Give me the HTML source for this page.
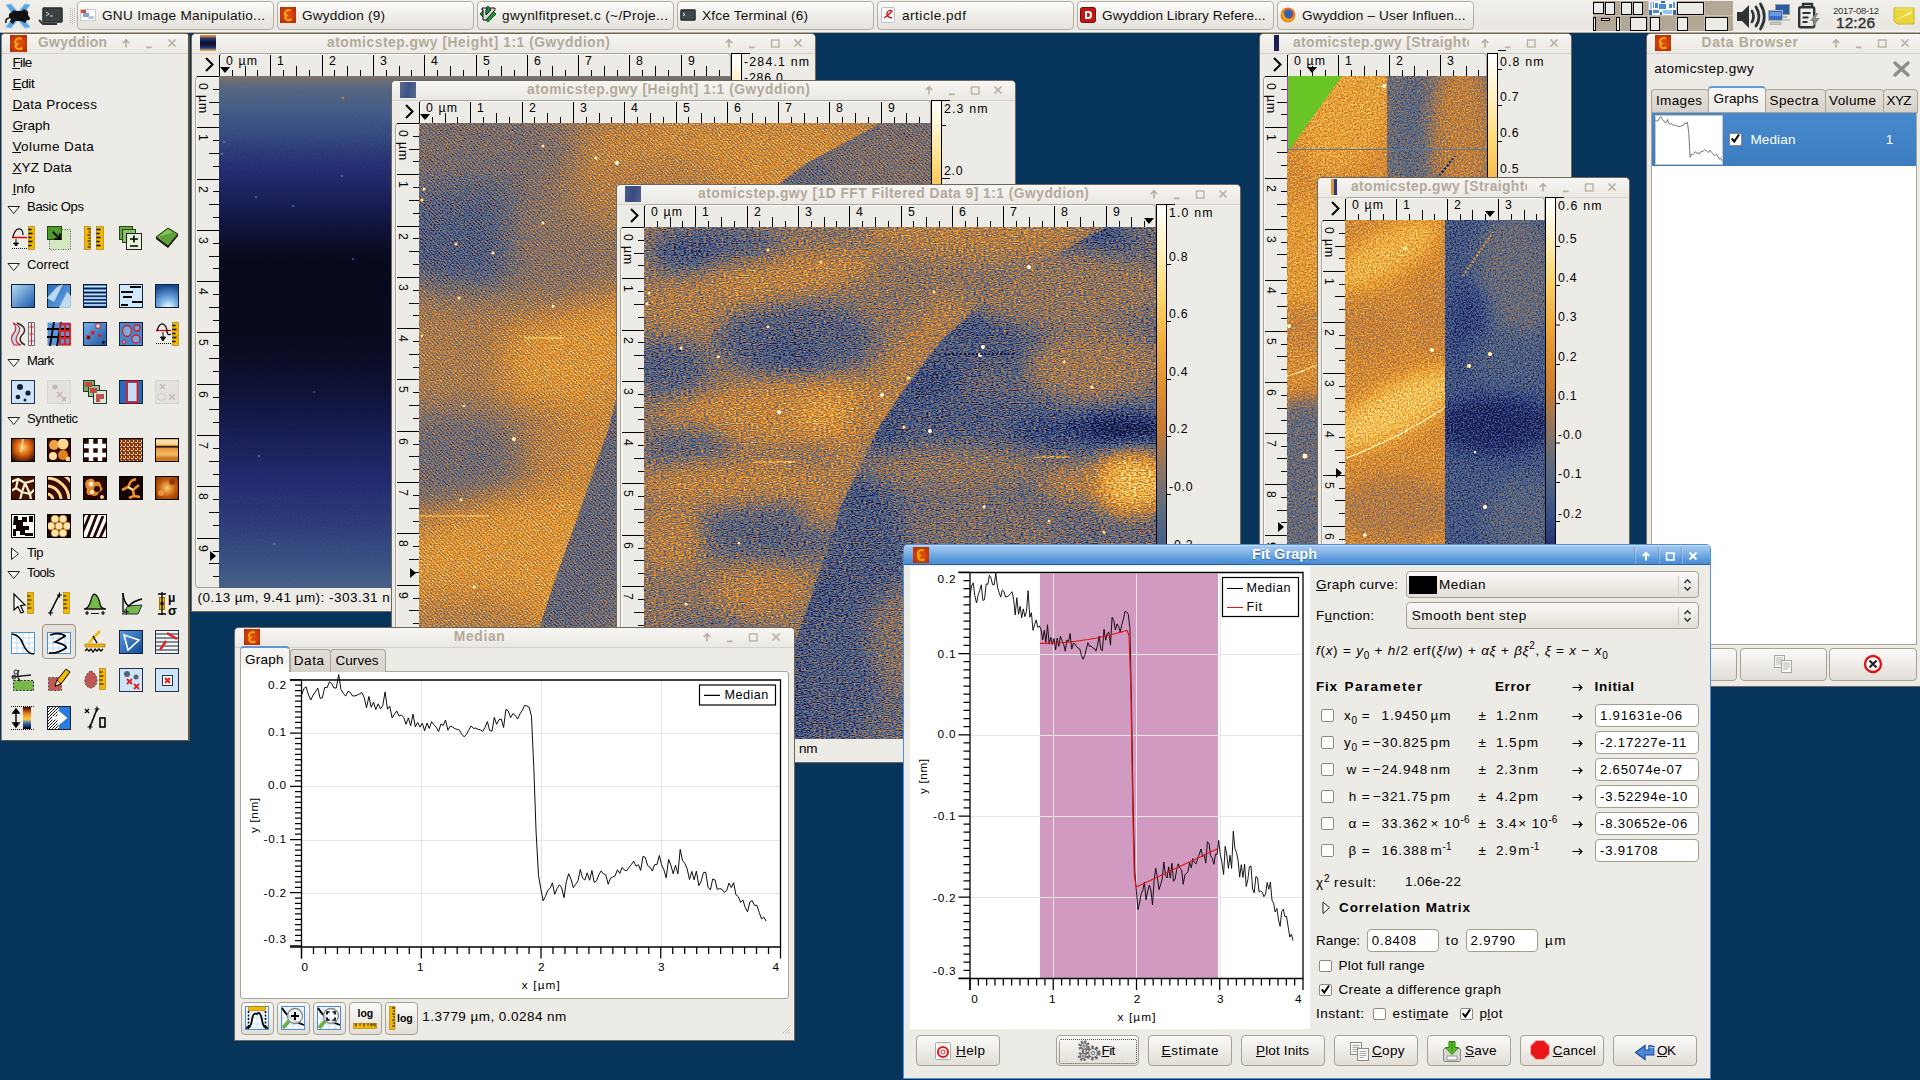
<!DOCTYPE html><html><head><meta charset="utf-8"><title>desktop</title><style>
html,body{margin:0;padding:0}
body{width:1920px;height:1080px;background:#07345b;position:relative;overflow:hidden;font-family:"Liberation Sans",sans-serif;font-size:14px;color:#000}
.a{position:absolute;box-sizing:border-box}
.t{position:absolute;white-space:pre;display:block}
.win{position:absolute;background:#edebe6;box-sizing:border-box;border:1px solid #c9c4bb;border-radius:4px 4px 0 0;overflow:hidden}
.tb{position:absolute;left:0;top:0;right:0;height:19px;background:linear-gradient(#f7f6f3,#ebe8e3);border-bottom:1px solid #d6d2ca}
.tba{background:linear-gradient(#7fb0e2,#4a8ad0 45%,#3a7cc6);border-bottom:1px solid #2f6bb0}
.btn{position:absolute;box-sizing:border-box;border:1px solid #a8a294;border-radius:4px;background:linear-gradient(#fbfaf9,#ece9e4 60%,#e2ded7)}
.ent{position:absolute;box-sizing:border-box;border:1px solid #a39d90;border-radius:4px;background:#fff}
.cb{position:absolute;box-sizing:border-box;width:13px;height:13px;border:1px solid #8f897c;border-radius:2px;background:#fff}
svg{position:absolute;overflow:visible}
u{text-decoration:underline;text-underline-offset:1px}
</style></head><body>
<div class="a" style="left:0;top:0;width:1920px;height:33px;background:linear-gradient(#f1efeb,#eae7e2 90%,#f6f5f2);border-bottom:1px solid #b3aa9a"></div>
<svg style="left:3px;top:2px" width="30" height="28" viewBox="0 0 30 28">
<path d="M3 3 L8 2 L15 10 L22 2 L27 3 L19 14 L27 25 L22 26 L15 18 L8 26 L3 25 L11 14 Z" fill="#5aa5e0" stroke="#8cc4ee" stroke-width="1"/>
<path d="M6 16 Q5 11 9 10 Q10 7 13 9 L19 9 Q20 6 23 8 Q26 9 25 13 L27 16 Q27 19 24 18 L22 21 L18 19 L12 19 L10 22 L7 20 L8 17 Z" fill="#111"/>
<path d="M6 16 Q2 17 3 21" stroke="#111" stroke-width="1.5" fill="none"/>
</svg>
<svg style="left:39px;top:7px" width="25" height="20" viewBox="0 0 25 20">
<rect x="3.500" y="0.500" width="20" height="15" rx="1.500" fill="#2e3436" stroke="#555753"/>
<rect x="5" y="2" width="17" height="12" fill="#3c4143"/>
<path d="M7 5 l3 2 l-3 2 M11 9 h3" stroke="#d3d7cf" stroke-width="1" fill="none"/>
<path d="M0 13 l4 4 h14" stroke="#2e3436" stroke-width="2" fill="none"/>
</svg>
<div class="a" style="left:70px;top:8px;width:1px;height:1px;background:#b9b4aa"></div>
<div class="a" style="left:72px;top:9px;width:1px;height:1px;background:#b9b4aa"></div>
<div class="a" style="left:74px;top:8px;width:1px;height:1px;background:#b9b4aa"></div>
<div class="a" style="left:70px;top:10px;width:1px;height:1px;background:#b9b4aa"></div>
<div class="a" style="left:72px;top:11px;width:1px;height:1px;background:#b9b4aa"></div>
<div class="a" style="left:74px;top:10px;width:1px;height:1px;background:#b9b4aa"></div>
<div class="a" style="left:70px;top:12px;width:1px;height:1px;background:#b9b4aa"></div>
<div class="a" style="left:72px;top:13px;width:1px;height:1px;background:#b9b4aa"></div>
<div class="a" style="left:74px;top:12px;width:1px;height:1px;background:#b9b4aa"></div>
<div class="a" style="left:70px;top:14px;width:1px;height:1px;background:#b9b4aa"></div>
<div class="a" style="left:72px;top:15px;width:1px;height:1px;background:#b9b4aa"></div>
<div class="a" style="left:74px;top:14px;width:1px;height:1px;background:#b9b4aa"></div>
<div class="a" style="left:70px;top:16px;width:1px;height:1px;background:#b9b4aa"></div>
<div class="a" style="left:72px;top:17px;width:1px;height:1px;background:#b9b4aa"></div>
<div class="a" style="left:74px;top:16px;width:1px;height:1px;background:#b9b4aa"></div>
<div class="a" style="left:70px;top:18px;width:1px;height:1px;background:#b9b4aa"></div>
<div class="a" style="left:72px;top:19px;width:1px;height:1px;background:#b9b4aa"></div>
<div class="a" style="left:74px;top:18px;width:1px;height:1px;background:#b9b4aa"></div>
<div class="a" style="left:70px;top:20px;width:1px;height:1px;background:#b9b4aa"></div>
<div class="a" style="left:72px;top:21px;width:1px;height:1px;background:#b9b4aa"></div>
<div class="a" style="left:74px;top:20px;width:1px;height:1px;background:#b9b4aa"></div>
<div class="a" style="left:70px;top:22px;width:1px;height:1px;background:#b9b4aa"></div>
<div class="a" style="left:72px;top:23px;width:1px;height:1px;background:#b9b4aa"></div>
<div class="a" style="left:74px;top:22px;width:1px;height:1px;background:#b9b4aa"></div>
<div class="btn" style="left:77px;top:1px;width:197px;height:29px;border-color:#b5afa3;background:linear-gradient(#fdfdfc,#efede9 50%,#e6e3dd)"></div>
<svg style="left:80px;top:7px" width="16" height="16"><rect x="0.500" y="2.500" width="15" height="11" fill="#fff" stroke="#c8c8c8"/><rect x="1" y="3" width="5" height="3" fill="#d04a3a"/><rect x="3" y="6" width="6" height="4" fill="#7aa6d8"/><rect x="8" y="9" width="6" height="3" fill="#b8c8e0"/></svg>
<span class="t" style="left:102.00px;top:9.00px;font-size:13.6px;line-height:13.6px;letter-spacing:0.287px;color:#111;">GNU Image Manipulatio...</span>
<div class="btn" style="left:277px;top:1px;width:197px;height:29px;border-color:#b5afa3;background:linear-gradient(#fdfdfc,#efede9 50%,#e6e3dd)"></div>
<svg style="left:280px;top:7px" width="16" height="16" viewBox="0 0 16 16"><defs><radialGradient id="gi280_7" cx="50%" cy="50%" r="70%"><stop offset="0" stop-color="#e8560e"/><stop offset="1" stop-color="#b02a08"/></radialGradient></defs><rect width="16" height="16" fill="url(#gi280_7)"/><path d="M11 3.500 Q6 2 5 6 Q4.500 8.500 7.500 8.500 Q4.500 9.500 5.500 11.500 Q7 14 10.500 12.500 L10.500 14" stroke="#ffb010" stroke-width="1.800" fill="none"/></svg>
<span class="t" style="left:302.00px;top:9.00px;font-size:13.6px;line-height:13.6px;letter-spacing:0.189px;color:#111;">Gwyddion (9)</span>
<div class="btn" style="left:477px;top:1px;width:197px;height:29px;border-color:#b5afa3;background:linear-gradient(#fdfdfc,#efede9 50%,#e6e3dd)"></div>
<svg style="left:480px;top:6px" width="17" height="17"><path d="M8 0 L16 8 L8 16 L0 8 Z" fill="#1a9a3a" stroke="#0a5a1a"/><path d="M2 2 h5 v2 h-1 v5 l5 -5 h-1 v-2 h5 v2 l-9 10 h-3 v-10 h-1 z" fill="#d8d8d8" stroke="#111" stroke-width="1"/></svg>
<span class="t" style="left:502.00px;top:9.00px;font-size:13.6px;line-height:13.6px;letter-spacing:0.340px;color:#111;">gwynlfitpreset.c (~/Proje...</span>
<div class="btn" style="left:677px;top:1px;width:197px;height:29px;border-color:#b5afa3;background:linear-gradient(#fdfdfc,#efede9 50%,#e6e3dd)"></div>
<svg style="left:680px;top:7px" width="16" height="16"><rect x="0.500" y="2.500" width="15" height="11" rx="1" fill="#2e3436" stroke="#555753"/><rect x="2" y="4" width="12" height="8" fill="#40464a"/><path d="M3 6 l2 1.500 l-2 1.500" stroke="#eee" fill="none"/></svg>
<span class="t" style="left:702.00px;top:9.00px;font-size:13.6px;line-height:13.6px;letter-spacing:0.216px;color:#111;">Xfce Terminal (6)</span>
<div class="btn" style="left:877px;top:1px;width:197px;height:29px;border-color:#b5afa3;background:linear-gradient(#fdfdfc,#efede9 50%,#e6e3dd)"></div>
<svg style="left:880px;top:7px" width="16" height="16"><rect x="1.500" y="0.500" width="13" height="15" rx="1.500" fill="#fff" stroke="#c0c0c0"/><path d="M4 11 Q9 8 12 4 Q9 2 7 6 Q6 10 12 11" stroke="#d01010" stroke-width="1.300" fill="none"/></svg>
<span class="t" style="left:902.00px;top:9.00px;font-size:13.6px;line-height:13.6px;letter-spacing:0.498px;color:#111;">article.pdf</span>
<div class="btn" style="left:1077px;top:1px;width:197px;height:29px;border-color:#b5afa3;background:linear-gradient(#fdfdfc,#efede9 50%,#e6e3dd)"></div>
<svg style="left:1080px;top:7px" width="16" height="16"><rect x="0.500" y="0.500" width="15" height="15" rx="2" fill="#c01818" stroke="#7a0c0c"/><path d="M5 4 h3.500 q3.500 0 3.500 4 q0 4 -3.500 4 h-3.500 z M7 6 v4 h1.500 q1.500 0 1.500 -2 q0 -2 -1.500 -2 z" fill="#fff" fill-rule="evenodd"/></svg>
<span class="t" style="left:1102.00px;top:9.00px;font-size:13.6px;line-height:13.6px;letter-spacing:0.072px;color:#111;">Gwyddion Library Refere...</span>
<div class="btn" style="left:1277px;top:1px;width:197px;height:29px;border-color:#b5afa3;background:linear-gradient(#fdfdfc,#efede9 50%,#e6e3dd)"></div>
<svg style="left:1280px;top:7px" width="16" height="16"><circle cx="8" cy="8" r="7.500" fill="#e8781a"/><circle cx="8.500" cy="7" r="4.500" fill="#3a5fb0"/><path d="M1 6 Q2 13 8 15 Q14 14 15 8 Q13 12 9 12 Q4 11 4 6 Q2 4 1 6Z" fill="#f0a020"/></svg>
<span class="t" style="left:1302.00px;top:9.00px;font-size:13.6px;line-height:13.6px;letter-spacing:0.132px;color:#111;">Gwyddion – User Influen...</span>
<div class="a" style="left:1593px;top:1px;width:140px;height:30px;background:#b3a896"></div>
<div class="a" style="left:1620.08px;top:1px;width:0.8px;height:30px;background:#c9c0af"></div>
<div class="a" style="left:1647.81px;top:1px;width:0.8px;height:30px;background:#c9c0af"></div>
<div class="a" style="left:1675.94px;top:1px;width:0.8px;height:30px;background:#c9c0af"></div>
<div class="a" style="left:1704.06px;top:1px;width:0.8px;height:30px;background:#c9c0af"></div>
<div class="a" style="left:1593px;top:15px;width:140px;height:1px;background:#c9c0af"></div>
<div class="a" style="left:1648.5px;top:1px;width:27.5px;height:14px;background:#fafcff;"></div>
<div class="a" style="left:1593px;top:1.5px;width:10.5px;height:12px;background:#edebe6;border:1px solid #000;"></div>
<div class="a" style="left:1604.5px;top:1.5px;width:10px;height:13px;background:#edebe6;border:1px solid #000;"></div>
<div class="a" style="left:1621px;top:1.5px;width:10.5px;height:13px;background:#edebe6;border:1px solid #000;"></div>
<div class="a" style="left:1632.5px;top:1.5px;width:10px;height:13px;background:#edebe6;border:1px solid #000;"></div>
<div class="a" style="left:1677px;top:1.5px;width:26.5px;height:13px;background:#edebe6;border:1px solid #000;"></div>
<div class="a" style="left:1593px;top:16.5px;width:2.5px;height:14px;background:#edebe6;border:1px solid #000;"></div>
<div class="a" style="left:1601px;top:18px;width:9px;height:2.5px;background:#edebe6;border:1px solid #000;"></div>
<div class="a" style="left:1616px;top:16.5px;width:3.5px;height:14px;background:#edebe6;border:1px solid #000;"></div>
<div class="a" style="left:1630px;top:16.5px;width:17px;height:14px;background:#edebe6;border:1px solid #000;"></div>
<div class="a" style="left:1649.5px;top:16.5px;width:10px;height:14px;background:#edebe6;border:1px solid #000;"></div>
<div class="a" style="left:1677px;top:16.5px;width:10.5px;height:14px;background:#edebe6;border:1px solid #000;"></div>
<div class="a" style="left:1705px;top:16.5px;width:22.5px;height:14px;background:#edebe6;border:1px solid #000;"></div>
<div class="a" style="left:1650px;top:2px;width:2px;height:6.5px;background:#9cc8f4;"></div>
<div class="a" style="left:1652.5px;top:2px;width:1.5px;height:6px;background:#5a98dc;"></div>
<div class="a" style="left:1655px;top:3px;width:2.5px;height:5px;background:#4a8ad0;"></div>
<div class="a" style="left:1659px;top:4px;width:7px;height:4.5px;background:#4a8ad0;"></div>
<div class="a" style="left:1660.5px;top:1px;width:4.5px;height:1.5px;background:#3868a8;"></div>
<div class="a" style="left:1669px;top:4px;width:2.5px;height:4px;background:#4a8ad0;"></div>
<div class="a" style="left:1673px;top:2px;width:2px;height:6px;background:#5a98dc;"></div>
<div class="a" style="left:1649px;top:10px;width:2.5px;height:4.5px;background:#3868a8;"></div>
<div class="a" style="left:1652.5px;top:10px;width:6.5px;height:2.5px;background:#4a8ad0;"></div>
<div class="a" style="left:1663px;top:9.5px;width:9px;height:4.5px;background:#8fc4f4;"></div>
<div class="a" style="left:1673px;top:9.5px;width:2.5px;height:5.5px;background:#3868a8;"></div>
<div class="a" style="left:1660px;top:11.5px;width:1.5px;height:3px;background:#3868a8;"></div>
<svg style="left:1736px;top:3px" width="30" height="27" viewBox="0 0 30 27">
<path d="M1 9 h5 l7 -7 v23 l-7 -7 h-5 z" fill="#2e3436"/>
<path d="M16 8 q3 5.500 0 11" stroke="#2e3436" stroke-width="2.600" fill="none" stroke-linecap="round"/>
<path d="M20 4 q6 9.500 0 19" stroke="#2e3436" stroke-width="2.800" fill="none" stroke-linecap="round"/>
<path d="M24.500 1 q7.500 12.500 0 25" stroke="#2e3436" stroke-width="2.800" fill="none" stroke-linecap="round"/>
</svg>
<svg style="left:1768px;top:4px" width="24" height="22" viewBox="0 0 24 22">
<rect x="7.500" y="0.500" width="14" height="10" fill="#2a5aa8" stroke="#9a9a94"/>
<rect x="10" y="12" width="9" height="2" fill="#b8b8b0"/>
<rect x="0.500" y="6.500" width="14" height="10" fill="#3a6ec0" stroke="#b0b0a8"/>
<rect x="2" y="8" width="11" height="4" fill="#6a9ae0"/>
<rect x="2" y="18" width="11" height="2.500" fill="#c8c8c0" stroke="#909088" stroke-width="0.500"/>
<rect x="14" y="15" width="8" height="2" fill="#c8c8c0"/>
</svg>
<svg style="left:1797px;top:3px" width="26" height="26" viewBox="0 0 26 26">
<path d="M6 3 v-2 h9 v2" stroke="#2e3436" stroke-width="2.400" fill="none"/>
<rect x="2.200" y="4.200" width="15" height="20" rx="1.500" fill="none" stroke="#2e3436" stroke-width="2.400"/>
<path d="M5.500 10 h8 M5.500 14.500 h6 M5.500 19 h5" stroke="#2e3436" stroke-width="2.200"/>
<path d="M19 10 l-6 8 h4 l-2 7 l8 -10 h-4.500 l3 -5 z" fill="#8a8a86"/>
</svg>
<span class="t" style="left:1833.00px;top:6.00px;font-size:9.5px;line-height:9.5px;letter-spacing:-0.283px;color:#2e3436;">2017-08-12</span>
<span class="t" style="left:1836.00px;top:15.00px;font-size:15.5px;line-height:15.5px;letter-spacing:0.062px;color:#2e3436;-webkit-text-stroke:0.4px #2e3436;">12:26</span>
<svg style="left:1893px;top:7px" width="22" height="19" viewBox="0 0 22 19">
<path d="M1 1 h20 v16 h-17 l-3 -3 z" fill="#e8d63a" stroke="#c9b51c"/>
<path d="M1 14 L19 4 L19 6 Z" fill="#fffbe0"/>
<path d="M2 2 h18" stroke="#f4ec80"/>
</svg>
<div class="win" style="left:1px;top:33px;width:189px;height:708px;border-color:#6e685c #5a5446 #5a5446 #8a8478;border-right-width:2px">
<div class="tb"></div><svg style="left:8px;top:1px" width="17" height="17" viewBox="0 0 16 16"><defs><radialGradient id="gi8_1" cx="50%" cy="50%" r="70%"><stop offset="0" stop-color="#e8560e"/><stop offset="1" stop-color="#b02a08"/></radialGradient></defs><rect width="16" height="16" fill="url(#gi8_1)"/><path d="M11 3.500 Q6 2 5 6 Q4.500 8.500 7.500 8.500 Q4.500 9.500 5.500 11.500 Q7 14 10.500 12.500 L10.500 14" stroke="#ffb010" stroke-width="1.800" fill="none"/></svg><span class="t" style="left:36.00px;top:2.00px;font-size:13.8px;line-height:13.8px;letter-spacing:0.335px;font-weight:bold;color:#b3a999;">Gwyddion</span>
<svg style="left:118px;top:2.6px" width="12" height="12"><path d="M6 10.500 V3 M2.800 6 L6 2.800 L9.200 6" stroke="#b9b0a2" stroke-width="1.7" fill="none"/></svg><svg style="left:141px;top:2.6px" width="12" height="12"><path d="M3 10.300 H8.500" stroke="#b9b0a2" stroke-width="1.7"/></svg><svg style="left:164px;top:2.6px" width="12" height="12"><path d="M2.500 2.500 L9.500 9.500 M9.500 2.500 L2.500 9.500" stroke="#b9b0a2" stroke-width="1.7"/></svg>
<span class="t" style="left:10.40px;top:22.00px;font-size:13.5px;line-height:13.5px;letter-spacing:-0.600px;"><u>F</u>ile</span>
<span class="t" style="left:10.40px;top:43.00px;font-size:13.5px;line-height:13.5px;letter-spacing:-0.285px;"><u>E</u>dit</span>
<span class="t" style="left:10.40px;top:64.00px;font-size:13.5px;line-height:13.5px;letter-spacing:0.318px;"><u>D</u>ata Process</span>
<span class="t" style="left:10.40px;top:85.00px;font-size:13.5px;line-height:13.5px;letter-spacing:-0.008px;"><u>G</u>raph</span>
<span class="t" style="left:10.40px;top:106.00px;font-size:13.5px;line-height:13.5px;letter-spacing:0.414px;"><u>V</u>olume Data</span>
<span class="t" style="left:10.40px;top:127.00px;font-size:13.5px;line-height:13.5px;letter-spacing:0.130px;"><u>X</u>YZ Data</span>
<span class="t" style="left:10.40px;top:148.00px;font-size:13.5px;line-height:13.5px;letter-spacing:-0.015px;"><u>I</u>nfo</span>
<svg style="left:5px;top:170.5px" width="14" height="10"><path d="M1 1.500 H12.500 L6.750 8.500 Z" fill="#fff" stroke="#222" stroke-width="1"/></svg>
<span class="t" style="left:25.00px;top:166.00px;font-size:13px;line-height:13px;letter-spacing:-0.285px;">Basic Ops</span>
<svg style="left:5px;top:228px" width="14" height="10"><path d="M1 1.500 H12.500 L6.750 8.500 Z" fill="#fff" stroke="#222" stroke-width="1"/></svg>
<span class="t" style="left:25.00px;top:224.00px;font-size:13px;line-height:13px;letter-spacing:-0.107px;">Correct</span>
<svg style="left:5px;top:324px" width="14" height="10"><path d="M1 1.500 H12.500 L6.750 8.500 Z" fill="#fff" stroke="#222" stroke-width="1"/></svg>
<span class="t" style="left:25.00px;top:320.00px;font-size:13px;line-height:13px;letter-spacing:-0.600px;">Mark</span>
<svg style="left:5px;top:382px" width="14" height="10"><path d="M1 1.500 H12.500 L6.750 8.500 Z" fill="#fff" stroke="#222" stroke-width="1"/></svg>
<span class="t" style="left:25.00px;top:378.00px;font-size:13px;line-height:13px;letter-spacing:-0.304px;">Synthetic</span>
<svg style="left:8px;top:513px" width="10" height="14"><path d="M1.500 1 V12.500 L8.500 6.750 Z" fill="#fff" stroke="#222" stroke-width="1"/></svg>
<span class="t" style="left:25.00px;top:512.00px;font-size:13px;line-height:13px;letter-spacing:-0.600px;">Tip</span>
<svg style="left:5px;top:536px" width="14" height="10"><path d="M1 1.500 H12.500 L6.750 8.500 Z" fill="#fff" stroke="#222" stroke-width="1"/></svg>
<span class="t" style="left:25.00px;top:532.00px;font-size:13px;line-height:13px;letter-spacing:-0.572px;">Tools</span>
<svg style="left:9px;top:192px;overflow:hidden" width="24" height="24" viewBox="0 0 24 24"><path d="M1 11.500 h15" stroke="#d00" stroke-width="1.300"/><path d="M2 11 Q4 2 9 3 Q12 4 12 9" stroke="#111" fill="none" stroke-width="1.300"/><path d="M5 13 v6 M2.500 17 l2.500 3 l2.500 -3 z" stroke="#111" fill="#111" stroke-width="1"/><path d="M1 22.500 h15" stroke="#111" stroke-dasharray="1 1"/><rect x="17.500" y="0.500" width="6" height="23" fill="#f5b800" stroke="#a07800" stroke-width="0.600"/><path d="M17.500 3.500 h3 M17.500 7.500 h4 M17.500 11.500 h3 M17.500 15.500 h4 M17.500 19.500 h3" stroke="#000" stroke-width="1.400"/></svg>
<svg style="left:45px;top:192px;overflow:hidden" width="24" height="24" viewBox="0 0 24 24"><rect x="2.500" y="3.500" width="21" height="20" fill="#d4e8c0" stroke="#555" stroke-dasharray="1 1.500"/><rect x="0.500" y="0.500" width="14" height="13" fill="#4f9a2c" stroke="#1e4a10"/><path d="M6 6 L13 13 M13 7.500 V13 H7.500" stroke="#000" stroke-width="1.800" fill="none"/></svg>
<svg style="left:81px;top:192px;overflow:hidden" width="24" height="24" viewBox="0 0 24 24"><rect x="1.500" y="0.500" width="6" height="23" fill="#f5b800" stroke="#a07800" stroke-width="0.600"/><rect x="13.500" y="0.500" width="7" height="23" fill="#f5b800" stroke="#a07800" stroke-width="0.600"/><path d="M4.500 3 h3 M5.500 6 h2 M4.500 9 h3 M5.500 12 h2 M4.500 15 h3 M5.500 18 h2 M4.500 21 h3" stroke="#000" stroke-width="1.200"/><path d="M13.500 3.500 h4 M13.500 7.500 h3 M13.500 11.500 h4 M13.500 15.500 h3 M13.500 19.500 h4" stroke="#000" stroke-width="1.500"/></svg>
<svg style="left:117px;top:192px;overflow:hidden" width="24" height="24" viewBox="0 0 24 24"><rect x="0.500" y="0.500" width="13" height="13" fill="#6aa84a" stroke="#1e4a10"/><rect x="3.500" y="3.500" width="13" height="13" fill="#8cc06c" stroke="#1e4a10"/><rect x="7.500" y="7.500" width="15" height="16" fill="#e4f2d8" stroke="#222"/><path d="M11 13 h8 M15 9.500 v7 M11 20 h8" stroke="#000" stroke-width="1.600"/></svg>
<svg style="left:153px;top:192px;overflow:hidden" width="24" height="24" viewBox="0 0 24 24"><path d="M1 11 L13 2 L23 8 L13 20 Z" fill="#5f9f3a" stroke="#1e3a10" stroke-width="1"/><path d="M1 11 L13 20 L23 8 L23 10 L13 22 L1 13 Z" fill="#111"/><path d="M3 11 L13 3.500 L18 6.500 Z" fill="#9ad070" opacity="0.700"/></svg>
<svg style="left:9px;top:250px;overflow:hidden" width="24" height="24" viewBox="0 0 24 24"><defs><linearGradient id="bl1" x1="0" y1="0" x2="1" y2="1"><stop offset="0" stop-color="#b8dcf8"/><stop offset="1" stop-color="#1a5aa8"/></linearGradient></defs><rect x="0.500" y="0.500" width="23" height="23" fill="url(#bl1)" stroke="#123"/></svg>
<svg style="left:45px;top:250px;overflow:hidden" width="24" height="24" viewBox="0 0 24 24"><defs><linearGradient id="bl2" x1="0" y1="0" x2="1" y2="1"><stop offset="0" stop-color="#2a6ab8"/><stop offset="1" stop-color="#6aa8e8"/></linearGradient></defs><rect x="0.500" y="0.500" width="23" height="23" fill="url(#bl2)" stroke="#123"/><path d="M0 14 L10 3 L16 0 L7 18 Z M12 24 L20 8 L24 12 L24 24 Z" fill="#d8ecfc" opacity="0.800"/></svg>
<svg style="left:81px;top:250px;overflow:hidden" width="24" height="24" viewBox="0 0 24 24"><rect x="0.500" y="0.500" width="23" height="23" fill="#2a66b0" stroke="#123"/><path d="M1 2.500 h22 M1 6.500 h22 M1 10.500 h22 M1 14 h22 M1 17.500 h22 M1 21 h22" stroke="#d4e8fc" stroke-width="1.600"/><path d="M1 4.500 h22 M1 8.500 h22 M1 12.300 h22 M1 15.800 h22 M1 19.300 h22 M1 22.600 h22" stroke="#0a2050" stroke-width="1.100"/></svg>
<svg style="left:117px;top:250px;overflow:hidden" width="24" height="24" viewBox="0 0 24 24"><rect x="0.500" y="0.500" width="23" height="23" fill="#d0e8fc" stroke="#123"/><path d="M11 3 h11 M2 8 h12 M4 13 h9 M13 18 h10 M2 21 h7" stroke="#000" stroke-width="2"/></svg>
<svg style="left:153px;top:250px;overflow:hidden" width="24" height="24" viewBox="0 0 24 24"><defs><radialGradient id="bl5" cx="0.550" cy="1" r="0.950"><stop offset="0" stop-color="#fff"/><stop offset="0.400" stop-color="#7ab4e8"/><stop offset="1" stop-color="#174a90"/></radialGradient></defs><rect x="0.500" y="0.500" width="23" height="23" fill="url(#bl5)" stroke="#123"/></svg>
<svg style="left:9px;top:288px;overflow:hidden" width="24" height="24" viewBox="0 0 24 24"><path d="M2 1 Q12 4 7 12 Q2 20 10 23 L3 23 Q-2 16 3 11 Q7 5 2 1Z" fill="#c8dcf0" stroke="#c03030" stroke-width="1.200"/><path d="M6 1 Q18 6 11 13 Q6 19 14 23" stroke="#333" fill="none" stroke-width="1.500"/><rect x="17.500" y="0.500" width="6" height="23" fill="#e8f0fa" stroke="#555" stroke-width="0.800"/><path d="M20.500 1 v22 M18.500 5 h4 M18.500 12 h4 M18.500 19 h4" stroke="#d02020" stroke-width="1.100"/></svg>
<svg style="left:45px;top:288px;overflow:hidden" width="24" height="24" viewBox="0 0 24 24"><rect x="0.500" y="0.500" width="23" height="23" fill="#5a96d8"/><path d="M7 0 L3 24 M14 0 L10 24 M0 7 h24 M0 15 h24" stroke="#000" stroke-width="1.800"/><path d="M13 1 v22 M18 1 v22 M23 1 v22 M12 2 h12 M12 9 h12 M12 16 h12 M12 22.500 h12" stroke="#e02020" stroke-width="1.800"/></svg>
<svg style="left:81px;top:288px;overflow:hidden" width="24" height="24" viewBox="0 0 24 24"><defs><linearGradient id="bl8" x1="0" y1="0" x2="1" y2="1"><stop offset="0" stop-color="#7ab0e8"/><stop offset="1" stop-color="#1a56a4"/></linearGradient></defs><rect x="0.500" y="0.500" width="23" height="23" fill="url(#bl8)" stroke="#123"/><rect x="13" y="2" width="4" height="4" fill="#fff" stroke="#d02020"/><rect x="8" y="9" width="3.500" height="3.500" fill="#d02020"/><rect x="15" y="12" width="3" height="3" fill="#d02020"/><rect x="4" y="14" width="3" height="3" fill="#000" stroke="#d02020"/><rect x="19" y="19" width="2.500" height="2.500" fill="#000"/></svg>
<svg style="left:117px;top:288px;overflow:hidden" width="24" height="24" viewBox="0 0 24 24"><rect x="0.500" y="0.500" width="23" height="23" fill="#4a86d0" stroke="#123"/><ellipse cx="8" cy="9" rx="4.500" ry="5.500" fill="#7aaae0" stroke="#d02020" stroke-width="1.300"/><circle cx="18" cy="6" r="3" fill="#7aaae0" stroke="#d02020" stroke-width="1.300"/><circle cx="17" cy="17" r="4" fill="#7aaae0" stroke="#d02020" stroke-width="1.300"/><circle cx="5" cy="20" r="2" fill="#7aaae0" stroke="#d02020"/></svg>
<svg style="left:153px;top:288px;overflow:hidden" width="24" height="24" viewBox="0 0 24 24"><path d="M1 8.500 h15" stroke="#d00" stroke-width="1.300"/><path d="M2 9 Q4 1 8 2 Q12 4 12 10 Q13 14 16 12" stroke="#111" fill="none" stroke-width="1.300"/><path d="M8 10 v8 M5.500 15 l2.500 4 l2.500 -4 z" stroke="#111" fill="#111" stroke-width="1"/><path d="M1 21.500 h15" stroke="#111" stroke-dasharray="1 1"/><rect x="17.500" y="0.500" width="6" height="23" fill="#f5b800" stroke="#a07800" stroke-width="0.600"/><path d="M17.500 3.500 h3 M17.500 7.500 h4 M17.500 11.500 h3 M17.500 15.500 h4 M17.500 19.500 h3" stroke="#000" stroke-width="1.400"/></svg>
<svg style="left:9px;top:346px;overflow:hidden" width="24" height="24" viewBox="0 0 24 24"><rect x="0.500" y="0.500" width="23" height="23" fill="#cfe4f8" stroke="#234"/><circle cx="9" cy="7" r="3" fill="#123"/><circle cx="17" cy="13" r="2.600" fill="#123"/><circle cx="7" cy="17" r="2.300" fill="#123"/><circle cx="14" cy="20" r="1.500" fill="#123"/></svg>
<svg style="left:45px;top:346px;overflow:hidden" width="24" height="24" viewBox="0 0 24 24"><rect x="0.500" y="0.500" width="23" height="23" fill="#e4e2de" stroke="#c8c4bc" stroke-dasharray="1 1"/><circle cx="8" cy="7" r="2.500" fill="#bdbab4"/><path d="M10 12 l5 5 m0 -5 l-5 5 M15 17 l4 4 m0 -4 l-4 4" stroke="#c8b0b0" stroke-width="1.500"/></svg>
<svg style="left:81px;top:346px;overflow:hidden" width="24" height="24" viewBox="0 0 24 24"><rect x="0.500" y="0.500" width="11" height="11" fill="#78b050" stroke="#234"/><rect x="5.500" y="5.500" width="11" height="11" fill="#98c878" stroke="#234"/><rect x="10.500" y="10.500" width="13" height="13" fill="#d8ecd0" stroke="#234"/><rect x="2" y="2" width="7" height="5" fill="#c04848"/><rect x="7" y="8" width="7" height="5" fill="#c04848"/><path d="M13 14 h8 v5 h-4 v3 h-4 z" fill="#c05050"/></svg>
<svg style="left:117px;top:346px;overflow:hidden" width="24" height="24" viewBox="0 0 24 24"><rect x="0.500" y="0.500" width="23" height="23" fill="#2a6ac0" stroke="#123"/><rect x="9" y="3" width="9" height="18" fill="#c8dcf4"/><rect x="7.500" y="1.500" width="11" height="21" fill="none" stroke="#d82020" stroke-width="1.800"/></svg>
<svg style="left:153px;top:346px;overflow:hidden" width="24" height="24" viewBox="0 0 24 24"><rect x="0.500" y="0.500" width="23" height="23" fill="#e4e2de" stroke="#c8c4bc" stroke-dasharray="1 1"/><path d="M5 4 l5 5 m0 -5 l-5 5 M14 14 l6 6 m0 -6 l-6 6" stroke="#c8b8b8" stroke-width="1.500"/><rect x="3" y="14" width="7" height="6" fill="none" stroke="#bbb" stroke-dasharray="1 1"/></svg>
<svg style="left:9px;top:404px;overflow:hidden" width="24" height="24" viewBox="0 0 24 24"><defs><radialGradient id="sy1" cx="0.5" cy="0.4" r="0.7"><stop offset="0" stop-color="#ffd070"/><stop offset="0.450" stop-color="#d8600c"/><stop offset="1" stop-color="#200400"/></radialGradient></defs><rect width="24" height="24" fill="url(#sy1)"/><path d="M12 1 L10 14" stroke="#ffe8a0" stroke-width="2" opacity="0.700"/><rect x="0.500" y="0.500" width="23" height="23" fill="none" stroke="#000"/></svg>
<svg style="left:45px;top:404px;overflow:hidden" width="24" height="24" viewBox="0 0 24 24"><rect width="24" height="24" fill="#3a0a00"/><circle cx="7" cy="7" r="5" fill="#f0a040"/><circle cx="16" cy="6" r="5.500" fill="#ffd890"/><circle cx="6" cy="18" r="4" fill="#ffe0a0"/><circle cx="16" cy="17" r="5" fill="#e08020"/><circle cx="21" cy="21" r="2.500" fill="#ffd080"/><rect x="0.500" y="0.500" width="23" height="23" fill="none" stroke="#000"/></svg>
<svg style="left:81px;top:404px;overflow:hidden" width="24" height="24" viewBox="0 0 24 24"><rect width="24" height="24" fill="#2a0600"/><path d="M8 0 v24 M17 0 v24 M0 8 h24 M0 17 h24" stroke="#fff" stroke-width="4.500"/><rect x="0.500" y="0.500" width="23" height="23" fill="none" stroke="#000"/></svg>
<svg style="left:117px;top:404px;overflow:hidden" width="24" height="24" viewBox="0 0 24 24"><defs><pattern id="sp4" width="4" height="4" patternUnits="userSpaceOnUse"><rect width="4" height="4" fill="#a04008"/><rect width="2" height="1" fill="#fff0c0"/><rect x="2" y="2" width="1" height="2" fill="#ffd890"/><rect x="1" y="3" width="1" height="1" fill="#300800"/><rect x="3" y="1" width="1" height="1" fill="#401000"/></pattern></defs><rect width="24" height="24" fill="url(#sp4)"/><rect x="0.500" y="0.500" width="23" height="23" fill="none" stroke="#000"/></svg>
<svg style="left:153px;top:404px;overflow:hidden" width="24" height="24" viewBox="0 0 24 24"><defs><linearGradient id="sy5" x1="0" y1="0" x2="0" y2="1"><stop offset="0" stop-color="#c86010"/><stop offset="0.120" stop-color="#fff0c0"/><stop offset="0.300" stop-color="#f8c060"/><stop offset="0.360" stop-color="#1a0400"/><stop offset="0.440" stop-color="#e89a40"/><stop offset="0.700" stop-color="#f0b860"/><stop offset="0.850" stop-color="#c87020"/><stop offset="1" stop-color="#e09030"/></linearGradient></defs><rect width="24" height="24" fill="url(#sy5)"/><rect x="0.500" y="0.500" width="23" height="23" fill="none" stroke="#000"/></svg>
<svg style="left:9px;top:442px;overflow:hidden" width="24" height="24" viewBox="0 0 24 24"><rect width="24" height="24" fill="#4a1000"/><path d="M0 6 L7 3 L14 7 L24 4 M7 3 L5 12 L0 15 M5 12 L11 16 L14 7 M11 16 L9 24 M11 16 L19 18 L24 13 M19 18 L20 24 M14 7 L19 18" stroke="#fff4d0" stroke-width="2.200" fill="none"/><rect x="0.500" y="0.500" width="23" height="23" fill="none" stroke="#000"/></svg>
<svg style="left:45px;top:442px;overflow:hidden" width="24" height="24" viewBox="0 0 24 24"><rect width="24" height="24" fill="#3a0a00"/><g fill="none" stroke="#ffd890" stroke-width="3"><circle cx="0" cy="24" r="6"/><circle cx="0" cy="24" r="14"/><circle cx="0" cy="24" r="22"/><circle cx="0" cy="24" r="30"/></g><rect x="0.500" y="0.500" width="23" height="23" fill="none" stroke="#000"/></svg>
<svg style="left:81px;top:442px;overflow:hidden" width="24" height="24" viewBox="0 0 24 24"><rect width="24" height="24" fill="#2a0600"/><path d="M4 4 Q10 0 12 6 Q18 4 18 10 Q22 14 16 16 Q14 22 8 19 Q2 20 4 13 Q0 8 4 4Z" fill="#e08830"/><circle cx="8" cy="8" r="2.500" fill="#fff0c0"/><circle cx="14" cy="13" r="3" fill="#2a0600"/><circle cx="9" cy="16" r="2" fill="#fff0c0"/><circle cx="19" cy="21" r="2" fill="#ffd080"/><rect x="0.500" y="0.500" width="23" height="23" fill="none" stroke="#000"/></svg>
<svg style="left:117px;top:442px;overflow:hidden" width="24" height="24" viewBox="0 0 24 24"><rect width="24" height="24" fill="#180300"/><path d="M3 14 L9 11 L12 5 M9 11 L14 14 L20 9 M14 14 L15 20 L10 22 M15 20 L21 21 M12 5 L17 3" stroke="#f0902a" stroke-width="2.600" fill="none"/><path d="M9 11 L14 14" stroke="#fff0c0" stroke-width="1.500"/><rect x="0.500" y="0.500" width="23" height="23" fill="none" stroke="#000"/></svg>
<svg style="left:153px;top:442px;overflow:hidden" width="24" height="24" viewBox="0 0 24 24"><defs><radialGradient id="sy14" cx="0.5" cy="0.5" r="0.8"><stop offset="0" stop-color="#ffc870"/><stop offset="0.450" stop-color="#c05808"/><stop offset="1" stop-color="#6a1c00"/></radialGradient></defs><rect width="24" height="24" fill="url(#sy14)"/><circle cx="6" cy="17" r="3" fill="#f0a040" opacity="0.800"/><circle cx="17" cy="6" r="3" fill="#7a2400" opacity="0.700"/><rect x="0.500" y="0.500" width="23" height="23" fill="none" stroke="#000"/></svg>
<svg style="left:9px;top:480px;overflow:hidden" width="24" height="24" viewBox="0 0 24 24"><rect width="24" height="24" fill="#fff"/><path d="M3 2 h4 v4 h4 v-3 h5 v5 h-4 v4 h6 v4 h-4 v5 h-5 v-4 h-4 v5 h-3 v-7 h3 v-4 h-3 z M18 2 h4 v6 h-4z M14 19 h8 v3 h-8z" fill="#100200"/><rect x="0.500" y="0.500" width="23" height="23" fill="none" stroke="#000"/></svg>
<svg style="left:45px;top:480px;overflow:hidden" width="24" height="24" viewBox="0 0 24 24"><rect width="24" height="24" fill="#1c0400"/><g fill="#ffe8b0" stroke="#e09030" stroke-width="0.800"><circle cx="8" cy="5" r="3.800"/><circle cx="16" cy="5" r="3.800"/><circle cx="4" cy="12" r="3.800"/><circle cx="12" cy="12" r="3.800"/><circle cx="20" cy="12" r="3.800"/><circle cx="8" cy="19" r="3.800"/><circle cx="16" cy="19" r="3.800"/></g><rect x="0.500" y="0.500" width="23" height="23" fill="none" stroke="#000"/></svg>
<svg style="left:81px;top:480px;overflow:hidden" width="24" height="24" viewBox="0 0 24 24"><rect width="24" height="24" fill="#fff"/><path d="M-2 22 L8 -2 M4 26 L14 0 M10 26 L20 2 M16 26 L26 4 M-4 12 L2 -2" stroke="#2a0800" stroke-width="2.800"/><rect x="0.500" y="0.500" width="23" height="23" fill="none" stroke="#000"/></svg>
<svg style="left:9px;top:558px;overflow:hidden" width="24" height="24" viewBox="0 0 24 24"><rect x="16.500" y="0.500" width="6" height="21" fill="#f5b800" stroke="#a07800" stroke-width="0.600"/><path d="M16.500 4 h3 M16.500 8 h4 M16.500 12 h3 M16.500 16 h4" stroke="#000" stroke-width="1"/><path d="M3 2 L3 18 L7 14.500 L10 21 L12.500 20 L9.500 13.500 L14 13 Z" fill="#fff" stroke="#000" stroke-width="1.200"/></svg>
<svg style="left:45px;top:558px;overflow:hidden" width="24" height="24" viewBox="0 0 24 24"><rect x="16.500" y="0.500" width="6" height="21" fill="#f5b800" stroke="#a07800" stroke-width="0.600"/><path d="M16.500 4 h3 M16.500 8 h4 M16.500 12 h3 M16.500 16 h4" stroke="#000" stroke-width="1"/><path d="M3 21 L12 3" stroke="#000" stroke-width="1.600"/><path d="M1 21 h5 M3.500 18.500 v5 M10 3 h5 M12.500 0.500 v5" stroke="#000" stroke-width="1.200"/></svg>
<svg style="left:81px;top:558px;overflow:hidden" width="24" height="24" viewBox="0 0 24 24"><path d="M1 17 Q6 17 8 8 Q10 0 13 3 Q16 6 17 12 Q18 17 23 17 Z" fill="#78b848" stroke="#111" stroke-width="1.300"/><path d="M2 21 h4 M4 19 v4 M8 21.500 h8 M18 21 h4 M20 19 v4" stroke="#000" stroke-width="1.200"/></svg>
<svg style="left:117px;top:558px;overflow:hidden" width="24" height="24" viewBox="0 0 24 24"><path d="M3 22 L9 14 L23 13 L19 22 Z" fill="#78b848" stroke="#234"/><path d="M4 1 Q5 12 10 14 Q14 9 23 7" stroke="#000" stroke-width="1.500" fill="none"/><path d="M4 1 V20" stroke="#000" stroke-width="1.300"/><path d="M5 20 h5 M7.500 17.500 v5" stroke="#000"/></svg>
<svg style="left:153px;top:558px;overflow:hidden" width="24" height="24" viewBox="0 0 24 24"><rect x="4.500" y="5.500" width="5" height="12" fill="#f5b800" stroke="#a07800"/><path d="M7 0 V23 M3 2 h8 M3 22 h8" stroke="#000" stroke-width="1.300"/><rect x="5.500" y="10" width="3" height="3" fill="#000"/><text x="13" y="10" font-size="12" font-weight="bold" font-family="Liberation Sans">μ</text><text x="13" y="23" font-size="13" font-weight="bold" font-family="Liberation Sans">σ</text></svg>
<svg style="left:9px;top:598px;overflow:hidden" width="24" height="24" viewBox="0 0 24 24"><rect x="0.500" y="0.500" width="23" height="21" fill="#fff" stroke="#4a90d8"/><path d="M6 1 v20 M12 1 v20 M18 1 v20 M1 6 h22 M1 11 h22 M1 16 h22" stroke="#b8d8f4" stroke-width="1"/><path d="M1 2 Q9 3 12 12 Q16 22 23 22" stroke="#000" stroke-width="1.600" fill="none"/></svg>
<div class="btn" style="left:40px;top:590px;width:34px;height:35px;border-color:#9a9488;background:linear-gradient(#e4e0d8,#ebe8e2)"></div>
<svg style="left:45px;top:598px;overflow:hidden" width="24" height="24" viewBox="0 0 24 24"><rect x="0.500" y="0.500" width="23" height="21" fill="#fff" stroke="#4a90d8"/><path d="M6 1 v20 M12 1 v20 M18 1 v20 M1 6 h22 M1 11 h22 M1 16 h22" stroke="#b8d8f4" stroke-width="1"/><path d="M3 3 Q14 0 18 4 Q12 8 8 10 Q20 13 19 16 Q10 22 2 21" stroke="#000" stroke-width="1.800" fill="none"/></svg>
<svg style="left:81px;top:596px;overflow:hidden" width="24" height="24" viewBox="0 0 24 24"><path d="M2 14 h20 v3 h-20z" fill="#f5b800" stroke="#8a6800" stroke-width="0.600"/><path d="M6 13 L11 7 L17 1" stroke="#f5b800" stroke-width="2.500"/><path d="M10 6 L14 13" stroke="#000" stroke-width="1.400"/><path d="M2 21 l2 -2 l2 2 l2 -2 l2 3 l2 -3 l2 2 l2 -2 l2 2 l2 -2" stroke="#000" stroke-width="1.300" fill="none"/></svg>
<svg style="left:117px;top:596px;overflow:hidden" width="24" height="24" viewBox="0 0 24 24"><defs><linearGradient id="bl33" x1="0" y1="0" x2="1" y2="1"><stop offset="0" stop-color="#5a9ae0"/><stop offset="1" stop-color="#0f4a98"/></linearGradient></defs><rect x="0.500" y="0.500" width="23" height="23" fill="url(#bl33)" stroke="#123"/><path d="M5 5 L20 10 L9 20 Z" fill="none" stroke="#fff" stroke-width="1.600"/></svg>
<svg style="left:153px;top:596px;overflow:hidden" width="24" height="24" viewBox="0 0 24 24"><rect x="0.500" y="0.500" width="23" height="23" fill="#eef4fa" stroke="#234"/><path d="M1 4 h22 M1 8 h22 M1 12 h22 M1 16 h22 M1 20 h22" stroke="#222" stroke-width="1"/><path d="M5 20 L11 11 M12 3 L22 9" stroke="#e02020" stroke-width="2.400"/></svg>
<svg style="left:9px;top:634px;overflow:hidden" width="24" height="24" viewBox="0 0 24 24"><rect x="2.500" y="12.500" width="20" height="10" fill="#78b848" stroke="#234" stroke-dasharray="2 1.500"/><path d="M1 9 L20 7 M8 2 Q5 8 9 13" stroke="#222" stroke-width="1.300" fill="none"/><circle cx="5" cy="4" r="2" fill="none" stroke="#222"/><circle cx="3" cy="9" r="2" fill="none" stroke="#222"/></svg>
<svg style="left:45px;top:634px;overflow:hidden" width="24" height="24" viewBox="0 0 24 24"><rect x="1.500" y="9.500" width="13" height="13" fill="#c05858" stroke="#555" stroke-dasharray="2 1.500"/><path d="M8 18 L10 12 L19 1 L23 4 L14 16 Z" fill="#f5b800" stroke="#000" stroke-width="1"/><path d="M8 18 L10 12 L14 16 Z" fill="#f8e0b0" stroke="#000" stroke-width="0.800"/></svg>
<svg style="left:81px;top:634px;overflow:hidden" width="24" height="24" viewBox="0 0 24 24"><rect x="16.500" y="0.500" width="6" height="21" fill="#f5b800" stroke="#a07800" stroke-width="0.600"/><path d="M16.500 4 h3 M16.500 8 h4 M16.500 12 h3 M16.500 16 h4" stroke="#000" stroke-width="1"/><path d="M8 3 Q14 6 14 13 Q13 20 7 20 Q1 18 2 11 Q4 4 8 3Z" fill="#c05858" stroke="#444" stroke-dasharray="2 1.500"/></svg>
<svg style="left:117px;top:634px;overflow:hidden" width="24" height="24" viewBox="0 0 24 24"><rect x="0.500" y="0.500" width="23" height="23" fill="#cfe4f8" stroke="#234"/><circle cx="8" cy="6" r="3" fill="#345" opacity="0.800"/><circle cx="17" cy="9" r="2.500" fill="#345" opacity="0.800"/><path d="M8 11 l5 5 m0 -5 l-5 5 M15 16 l5 5 m0 -5 l-5 5" stroke="#e02020" stroke-width="1.800"/></svg>
<svg style="left:153px;top:634px;overflow:hidden" width="24" height="24" viewBox="0 0 24 24"><rect x="0.500" y="0.500" width="23" height="23" fill="#cfe4f8" stroke="#234"/><rect x="7.500" y="7.500" width="10" height="10" fill="#fff" stroke="#234"/><path d="M10 10 l5 5 m0 -5 l-5 5" stroke="#e02020" stroke-width="2"/></svg>
<svg style="left:9px;top:672px;overflow:hidden" width="24" height="24" viewBox="0 0 24 24"><defs><linearGradient id="tg1" x1="0" y1="0" x2="0" y2="1"><stop offset="0" stop-color="#300"/><stop offset="0.300" stop-color="#f08020"/><stop offset="0.550" stop-color="#f8d040"/><stop offset="0.750" stop-color="#3060c0"/><stop offset="1" stop-color="#001"/></linearGradient></defs><rect x="12" y="1" width="8" height="22" fill="url(#tg1)"/><path d="M0 0.500 h23 M0 23.500 h23" stroke="#000" stroke-dasharray="1 1"/><path d="M5 3 v18 M2 7 l3 -4 l3 4 z M2 17 l3 4 l3 -4 z" stroke="#000" fill="#000" stroke-width="1.400"/></svg>
<svg style="left:45px;top:672px;overflow:hidden" width="24" height="24" viewBox="0 0 24 24"><defs><pattern id="np" width="3" height="3" patternUnits="userSpaceOnUse"><rect width="3" height="3" fill="#fff"/><rect width="1" height="1" fill="#000"/><rect x="2" y="1" width="1" height="1" fill="#444"/><rect x="1" y="2" width="1" height="1" fill="#000"/></pattern></defs><rect x="0.500" y="0.500" width="23" height="23" fill="#2a7ae0" stroke="#123"/><rect x="1" y="1" width="11" height="22" fill="url(#np)"/><path d="M5 12 h11 M12 7 l6 5 l-6 5 z" stroke="#fff" fill="#fff" stroke-width="3"/></svg>
<svg style="left:81px;top:672px;overflow:hidden" width="24" height="24" viewBox="0 0 24 24"><path d="M7 21 L14 3" stroke="#000" stroke-width="1.600"/><path d="M4.500 21 h5 M7 18.500 v5 M11.500 3 h5 M14 0.500 v5" stroke="#000" stroke-width="1.200"/><path d="M2 3 l4 4 m0 -4 l-4 4" stroke="#000" stroke-width="1.200"/><rect x="17" y="12" width="5" height="9" fill="none" stroke="#000" stroke-width="1.600"/></svg>
</div>
<div class="a" style="left:192px;top:34px;width:623px;height:577px;background:#edebe6;border-radius:4px 4px 0 0;overflow:hidden;box-shadow:0 0 0 1px #6e685c">
<div class="tb"></div><div class="a" style="left:8px;top:1px;width:16px;height:16px;background:linear-gradient(#f0a030,#c08040 8%,#2a3470 22%,#0c0e26 50%,#1a2260 72%,#3c5c8a 86%,#f0a030 95%)"></div><span class="t" style="left:135.00px;top:2.00px;font-size:13.8px;line-height:13.8px;letter-spacing:0.540px;font-weight:bold;color:#b3a999;">atomicstep.gwy [Height] 1:1 (Gwyddion)</span>
<svg style="left:531px;top:2.6px" width="12" height="12"><path d="M6 10.500 V3 M2.800 6 L6 2.800 L9.200 6" stroke="#b9b0a2" stroke-width="1.7" fill="none"/></svg><svg style="left:554px;top:2.6px" width="12" height="12"><path d="M3 10.300 H8.500" stroke="#b9b0a2" stroke-width="1.7"/></svg><svg style="left:577px;top:2.6px" width="12" height="12"><rect x="2.500" y="3" width="7.500" height="7" stroke="#b9b0a2" stroke-width="1.36" fill="none"/></svg><svg style="left:600px;top:2.6px" width="12" height="12"><path d="M2.500 2.500 L9.500 9.500 M9.500 2.500 L2.500 9.500" stroke="#b9b0a2" stroke-width="1.7"/></svg>
<svg style="left:13px;top:23px" width="9" height="15"><path d="M1 1 L7.500 7.500 L1 14" stroke="#000" stroke-width="2" fill="none"/></svg>
<div class="a" style="left:27px;top:19px;width:512px;height:23px;border:1px solid #aaa498;border-bottom:none;border-radius:4px 4px 0 0;background:#edebe6;box-shadow:inset 1px 1px 0 #fbfaf8"></div><svg style="left:0;top:0" width="1" height="1"><path d="M27.5 21 V42M40.5 36 V42M53.5 32 V42M65.5 36 V42M78.5 21 V42M91.5 36 V42M104.5 32 V42M117.5 36 V42M130.5 21 V42M142.5 36 V42M155.5 32 V42M168.5 36 V42M181.5 21 V42M194.5 36 V42M207.5 32 V42M219.5 36 V42M232.5 21 V42M245.5 36 V42M258.5 32 V42M271.5 36 V42M284.5 21 V42M296.5 36 V42M309.5 32 V42M322.5 36 V42M335.5 21 V42M348.5 36 V42M360.5 32 V42M373.5 36 V42M386.5 21 V42M399.5 36 V42M412.5 32 V42M425.5 36 V42M437.5 21 V42M450.5 36 V42M463.5 32 V42M476.5 36 V42M489.5 21 V42M502.5 36 V42M514.5 32 V42M527.5 36 V42" stroke="#000" stroke-width="1" fill="none"/><path d="M28 33 h10 l-5 6 z" fill="#000"/></svg><span class="t" style="left:34.00px;top:21.00px;font-size:12.3px;line-height:12.3px;letter-spacing:1.149px;">0 µm</span><span class="t" style="left:85.00px;top:21.00px;font-size:12.3px;line-height:12.3px;letter-spacing:0.000px;">1</span><span class="t" style="left:137.00px;top:21.00px;font-size:12.3px;line-height:12.3px;letter-spacing:0.000px;">2</span><span class="t" style="left:188.00px;top:21.00px;font-size:12.3px;line-height:12.3px;letter-spacing:0.000px;">3</span><span class="t" style="left:239.00px;top:21.00px;font-size:12.3px;line-height:12.3px;letter-spacing:0.000px;">4</span><span class="t" style="left:291.00px;top:21.00px;font-size:12.3px;line-height:12.3px;letter-spacing:0.000px;">5</span><span class="t" style="left:342.00px;top:21.00px;font-size:12.3px;line-height:12.3px;letter-spacing:0.000px;">6</span><span class="t" style="left:393.00px;top:21.00px;font-size:12.3px;line-height:12.3px;letter-spacing:0.000px;">7</span><span class="t" style="left:444.00px;top:21.00px;font-size:12.3px;line-height:12.3px;letter-spacing:0.000px;">8</span><span class="t" style="left:496.00px;top:21.00px;font-size:12.3px;line-height:12.3px;letter-spacing:0.000px;">9</span>
<div class="a" style="left:3px;top:42px;width:24px;height:512px;border:1px solid #aaa498;border-right:none;border-radius:4px 0 0 4px;background:#edebe6;box-shadow:inset 1px 1px 0 #fbfaf8"></div><svg style="left:0;top:0" width="1" height="1"><path d="M5 42.5 H27M21 55.5 H27M17 68.5 H27M21 80.5 H27M5 93.5 H27M21 106.5 H27M17 119.5 H27M21 132.5 H27M5 145.5 H27M21 157.5 H27M17 170.5 H27M21 183.5 H27M5 196.5 H27M21 209.5 H27M17 222.5 H27M21 234.5 H27M5 247.5 H27M21 260.5 H27M17 273.5 H27M21 286.5 H27M5 298.5 H27M21 311.5 H27M17 324.5 H27M21 337.5 H27M5 350.5 H27M21 363.5 H27M17 375.5 H27M21 388.5 H27M5 401.5 H27M21 414.5 H27M17 427.5 H27M21 440.5 H27M5 452.5 H27M21 465.5 H27M17 478.5 H27M21 491.5 H27M5 504.5 H27M21 517.5 H27M17 529.5 H27M21 542.5 H27" stroke="#000" stroke-width="1" fill="none"/><path d="M18 517 v10 l6 -5 z" fill="#000"/></svg><span class="t" style="left:16.8px;top:48.5px;font-size:12.3px;line-height:12.3px;transform-origin:0 0;transform:rotate(90deg);letter-spacing:0.852px">0 µm</span><span class="t" style="left:16.8px;top:99.5px;font-size:12.3px;line-height:12.3px;transform-origin:0 0;transform:rotate(90deg);letter-spacing:0.360px">1</span><span class="t" style="left:16.8px;top:151.5px;font-size:12.3px;line-height:12.3px;transform-origin:0 0;transform:rotate(90deg);letter-spacing:0.360px">2</span><span class="t" style="left:16.8px;top:202.5px;font-size:12.3px;line-height:12.3px;transform-origin:0 0;transform:rotate(90deg);letter-spacing:0.360px">3</span><span class="t" style="left:16.8px;top:253.5px;font-size:12.3px;line-height:12.3px;transform-origin:0 0;transform:rotate(90deg);letter-spacing:0.360px">4</span><span class="t" style="left:16.8px;top:304.5px;font-size:12.3px;line-height:12.3px;transform-origin:0 0;transform:rotate(90deg);letter-spacing:0.360px">5</span><span class="t" style="left:16.8px;top:356.5px;font-size:12.3px;line-height:12.3px;transform-origin:0 0;transform:rotate(90deg);letter-spacing:0.360px">6</span><span class="t" style="left:16.8px;top:407.5px;font-size:12.3px;line-height:12.3px;transform-origin:0 0;transform:rotate(90deg);letter-spacing:0.360px">7</span><span class="t" style="left:16.8px;top:458.5px;font-size:12.3px;line-height:12.3px;transform-origin:0 0;transform:rotate(90deg);letter-spacing:0.360px">8</span><span class="t" style="left:16.8px;top:510.5px;font-size:12.3px;line-height:12.3px;transform-origin:0 0;transform:rotate(90deg);letter-spacing:0.360px">9</span>
<svg style="left:27px;top:42px" width="512" height="512" viewBox="0 0 512 512"><defs><filter id="pf1" x="0" y="0" width="512" height="512" filterUnits="userSpaceOnUse" color-interpolation-filters="sRGB"><feTurbulence type="fractalNoise" baseFrequency="0.7 0.9" numOctaves="1" seed="3" result="n"/><feColorMatrix in="n" type="matrix" values="1 0 0 0 0  1 0 0 0 0  1 0 0 0 0  0 0 0 0 1" result="n1"/><feComposite in="SourceGraphic" in2="n1" operator="arithmetic" k1="0" k2="1" k3="0.04" k4="-0.02" result="h"/><feComponentTransfer in="h"><feFuncR type="table" tableValues="0.0000 0.0123 0.0245 0.0368 0.0532 0.0707 0.0922 0.1167 0.1412 0.1766 0.2120 0.2493 0.2902 0.3310 0.3935 0.4674 0.5412 0.6327 0.7243 0.7974 0.8353 0.8732 0.9018 0.9254 0.9490 0.9653 0.9815 0.9932 0.9961 0.9990 1.0000 1.0000 1.0000"/><feFuncG type="table" tableValues="0.0000 0.0147 0.0294 0.0441 0.0639 0.0849 0.1113 0.1419 0.1725 0.2346 0.2966 0.3473 0.3765 0.4056 0.4254 0.4401 0.4549 0.4638 0.4726 0.4905 0.5255 0.5605 0.6035 0.6508 0.6980 0.7541 0.8103 0.8591 0.8941 0.9291 0.9557 0.9779 1.0000"/><feFuncB type="table" tableValues="0.0000 0.0417 0.0833 0.1250 0.1866 0.2531 0.3167 0.3779 0.4392 0.4747 0.5101 0.5303 0.5216 0.5128 0.4827 0.4413 0.4000 0.3203 0.2405 0.1882 0.1882 0.1882 0.2037 0.2274 0.2510 0.3219 0.3927 0.4794 0.5961 0.7128 0.8140 0.9070 1.0000"/><feFuncA type="linear" slope="0" intercept="1"/></feComponentTransfer></filter><linearGradient id="lg1" x1="0" y1="0" x2="0" y2="1"><stop offset="0" stop-color="#7d7d7d"/><stop offset="0.012" stop-color="#707070"/><stop offset="0.03" stop-color="#666666"/><stop offset="0.08" stop-color="#585858"/><stop offset="0.15" stop-color="#474747"/><stop offset="0.22" stop-color="#393939"/><stop offset="0.3" stop-color="#242424"/><stop offset="0.36" stop-color="#161616"/><stop offset="0.5" stop-color="#171717"/><stop offset="0.6" stop-color="#212121"/><stop offset="0.7" stop-color="#323232"/><stop offset="0.78" stop-color="#3e3e3e"/><stop offset="0.88" stop-color="#494949"/><stop offset="0.96" stop-color="#555555"/><stop offset="1" stop-color="#606060"/></linearGradient></defs><g filter="url(#pf1)"><rect width="512" height="512" fill="url(#lg1)"/><circle cx="124" cy="22" r="1.300" fill="#999999"/><circle cx="5" cy="66" r="1.300" fill="#6b6b6b"/><circle cx="3" cy="78" r="1.300" fill="#6b6b6b"/><circle cx="37" cy="121" r="1.300" fill="#5c5c5c"/><circle cx="74" cy="130" r="1.300" fill="#575757"/><circle cx="123" cy="100" r="1.300" fill="#5c5c5c"/><circle cx="134" cy="183" r="1.300" fill="#4c4c4c"/><circle cx="95" cy="316" r="1.300" fill="#4c4c4c"/><circle cx="40" cy="380" r="1.300" fill="#666666"/><circle cx="55" cy="468" r="1.300" fill="#6b6b6b"/></g></svg>
<div class="a" style="left:539px;top:19px;width:11px;height:535px;border:1px solid #000;background:linear-gradient(#ffffff 0.0%,#fff5d4 4.2%,#fee8a4 8.3%,#fdd76f 12.5%,#f5bd4e 16.7%,#eca63a 20.8%,#e19130 25.0%,#cf8130 29.2%,#af7845 33.3%,#867368 37.5%,#646c7b 41.7%,#4c6185 45.8%,#3a5286 50.0%,#293575 54.2%,#1c235d 58.3%,#121641 62.5%,#0a0c22 66.7%,#04050f 70.8%,#000000 75.0%,#000000 79.2%,#000000 83.3%,#000000 87.5%,#000000 91.7%,#000000 95.8%,#000000 100.0%)"></div><svg style="left:0;top:0" width="1" height="1"><path d="M550 19.5 h8" stroke="#000" stroke-width="1" fill="none"/></svg><span class="t" style="left:552.00px;top:22.00px;font-size:12.3px;line-height:12.3px;letter-spacing:1.206px;">-284.1 nm</span><span class="t" style="left:552.00px;top:38.00px;font-size:12.3px;line-height:12.3px;letter-spacing:0.814px;">-286.0</span>
<span class="t" style="left:5.50px;top:557.00px;font-size:13.5px;line-height:13.5px;letter-spacing:0.471px;">(0.13 µm, 9.41 µm): -303.31 nm</span>
</div>
<div class="a" style="left:392px;top:81px;width:623px;height:577px;background:#edebe6;border-radius:4px 4px 0 0;overflow:hidden;box-shadow:0 0 0 1px #6e685c">
<div class="tb"></div><div class="a" style="left:8px;top:1px;width:16px;height:16px;background:linear-gradient(100deg,#5a6a86,#3c5488 50%,#5a6a86)"></div><span class="t" style="left:135.00px;top:2.00px;font-size:13.8px;line-height:13.8px;letter-spacing:0.540px;font-weight:bold;color:#b3a999;">atomicstep.gwy [Height] 1:1 (Gwyddion)</span>
<svg style="left:531px;top:2.6px" width="12" height="12"><path d="M6 10.500 V3 M2.800 6 L6 2.800 L9.200 6" stroke="#b9b0a2" stroke-width="1.7" fill="none"/></svg><svg style="left:554px;top:2.6px" width="12" height="12"><path d="M3 10.300 H8.500" stroke="#b9b0a2" stroke-width="1.7"/></svg><svg style="left:577px;top:2.6px" width="12" height="12"><rect x="2.500" y="3" width="7.500" height="7" stroke="#b9b0a2" stroke-width="1.36" fill="none"/></svg><svg style="left:600px;top:2.6px" width="12" height="12"><path d="M2.500 2.500 L9.500 9.500 M9.500 2.500 L2.500 9.500" stroke="#b9b0a2" stroke-width="1.7"/></svg>
<svg style="left:13px;top:23px" width="9" height="15"><path d="M1 1 L7.500 7.500 L1 14" stroke="#000" stroke-width="2" fill="none"/></svg>
<div class="a" style="left:27px;top:19px;width:512px;height:23px;border:1px solid #aaa498;border-bottom:none;border-radius:4px 4px 0 0;background:#edebe6;box-shadow:inset 1px 1px 0 #fbfaf8"></div><svg style="left:0;top:0" width="1" height="1"><path d="M27.5 21 V42M40.5 36 V42M53.5 32 V42M65.5 36 V42M78.5 21 V42M91.5 36 V42M104.5 32 V42M117.5 36 V42M130.5 21 V42M142.5 36 V42M155.5 32 V42M168.5 36 V42M181.5 21 V42M194.5 36 V42M207.5 32 V42M219.5 36 V42M232.5 21 V42M245.5 36 V42M258.5 32 V42M271.5 36 V42M284.5 21 V42M296.5 36 V42M309.5 32 V42M322.5 36 V42M335.5 21 V42M348.5 36 V42M360.5 32 V42M373.5 36 V42M386.5 21 V42M399.5 36 V42M412.5 32 V42M425.5 36 V42M437.5 21 V42M450.5 36 V42M463.5 32 V42M476.5 36 V42M489.5 21 V42M502.5 36 V42M514.5 32 V42M527.5 36 V42" stroke="#000" stroke-width="1" fill="none"/><path d="M28 33 h10 l-5 6 z" fill="#000"/></svg><span class="t" style="left:34.00px;top:21.00px;font-size:12.3px;line-height:12.3px;letter-spacing:1.149px;">0 µm</span><span class="t" style="left:85.00px;top:21.00px;font-size:12.3px;line-height:12.3px;letter-spacing:0.000px;">1</span><span class="t" style="left:137.00px;top:21.00px;font-size:12.3px;line-height:12.3px;letter-spacing:0.000px;">2</span><span class="t" style="left:188.00px;top:21.00px;font-size:12.3px;line-height:12.3px;letter-spacing:0.000px;">3</span><span class="t" style="left:239.00px;top:21.00px;font-size:12.3px;line-height:12.3px;letter-spacing:0.000px;">4</span><span class="t" style="left:291.00px;top:21.00px;font-size:12.3px;line-height:12.3px;letter-spacing:0.000px;">5</span><span class="t" style="left:342.00px;top:21.00px;font-size:12.3px;line-height:12.3px;letter-spacing:0.000px;">6</span><span class="t" style="left:393.00px;top:21.00px;font-size:12.3px;line-height:12.3px;letter-spacing:0.000px;">7</span><span class="t" style="left:444.00px;top:21.00px;font-size:12.3px;line-height:12.3px;letter-spacing:0.000px;">8</span><span class="t" style="left:496.00px;top:21.00px;font-size:12.3px;line-height:12.3px;letter-spacing:0.000px;">9</span>
<div class="a" style="left:3px;top:42px;width:24px;height:512px;border:1px solid #aaa498;border-right:none;border-radius:4px 0 0 4px;background:#edebe6;box-shadow:inset 1px 1px 0 #fbfaf8"></div><svg style="left:0;top:0" width="1" height="1"><path d="M5 42.5 H27M21 55.5 H27M17 68.5 H27M21 80.5 H27M5 93.5 H27M21 106.5 H27M17 119.5 H27M21 132.5 H27M5 145.5 H27M21 157.5 H27M17 170.5 H27M21 183.5 H27M5 196.5 H27M21 209.5 H27M17 222.5 H27M21 234.5 H27M5 247.5 H27M21 260.5 H27M17 273.5 H27M21 286.5 H27M5 298.5 H27M21 311.5 H27M17 324.5 H27M21 337.5 H27M5 350.5 H27M21 363.5 H27M17 375.5 H27M21 388.5 H27M5 401.5 H27M21 414.5 H27M17 427.5 H27M21 440.5 H27M5 452.5 H27M21 465.5 H27M17 478.5 H27M21 491.5 H27M5 504.5 H27M21 517.5 H27M17 529.5 H27M21 542.5 H27" stroke="#000" stroke-width="1" fill="none"/><path d="M18 487 v10 l6 -5 z" fill="#000"/></svg><span class="t" style="left:16.8px;top:48.5px;font-size:12.3px;line-height:12.3px;transform-origin:0 0;transform:rotate(90deg);letter-spacing:0.852px">0 µm</span><span class="t" style="left:16.8px;top:99.5px;font-size:12.3px;line-height:12.3px;transform-origin:0 0;transform:rotate(90deg);letter-spacing:0.360px">1</span><span class="t" style="left:16.8px;top:151.5px;font-size:12.3px;line-height:12.3px;transform-origin:0 0;transform:rotate(90deg);letter-spacing:0.360px">2</span><span class="t" style="left:16.8px;top:202.5px;font-size:12.3px;line-height:12.3px;transform-origin:0 0;transform:rotate(90deg);letter-spacing:0.360px">3</span><span class="t" style="left:16.8px;top:253.5px;font-size:12.3px;line-height:12.3px;transform-origin:0 0;transform:rotate(90deg);letter-spacing:0.360px">4</span><span class="t" style="left:16.8px;top:304.5px;font-size:12.3px;line-height:12.3px;transform-origin:0 0;transform:rotate(90deg);letter-spacing:0.360px">5</span><span class="t" style="left:16.8px;top:356.5px;font-size:12.3px;line-height:12.3px;transform-origin:0 0;transform:rotate(90deg);letter-spacing:0.360px">6</span><span class="t" style="left:16.8px;top:407.5px;font-size:12.3px;line-height:12.3px;transform-origin:0 0;transform:rotate(90deg);letter-spacing:0.360px">7</span><span class="t" style="left:16.8px;top:458.5px;font-size:12.3px;line-height:12.3px;transform-origin:0 0;transform:rotate(90deg);letter-spacing:0.360px">8</span><span class="t" style="left:16.8px;top:510.5px;font-size:12.3px;line-height:12.3px;transform-origin:0 0;transform:rotate(90deg);letter-spacing:0.360px">9</span>
<svg style="left:27px;top:42px" width="512" height="512" viewBox="0 0 512 512"><defs><filter id="pf2" x="0" y="0" width="512" height="512" filterUnits="userSpaceOnUse" color-interpolation-filters="sRGB"><feTurbulence type="fractalNoise" baseFrequency="0.6 0.8" numOctaves="2" seed="7" result="n"/><feColorMatrix in="n" type="matrix" values="1 0 0 0 0  1 0 0 0 0  1 0 0 0 0  0 0 0 0 1" result="n1"/><feComposite in="SourceGraphic" in2="n1" operator="arithmetic" k1="0" k2="1" k3="0.6" k4="-0.3" result="h"/><feComponentTransfer in="h"><feFuncR type="table" tableValues="0.0000 0.0123 0.0245 0.0368 0.0532 0.0707 0.0922 0.1167 0.1412 0.1766 0.2120 0.2493 0.2902 0.3310 0.3935 0.4674 0.5412 0.6327 0.7243 0.7974 0.8353 0.8732 0.9018 0.9254 0.9490 0.9653 0.9815 0.9932 0.9961 0.9990 1.0000 1.0000 1.0000"/><feFuncG type="table" tableValues="0.0000 0.0147 0.0294 0.0441 0.0639 0.0849 0.1113 0.1419 0.1725 0.2346 0.2966 0.3473 0.3765 0.4056 0.4254 0.4401 0.4549 0.4638 0.4726 0.4905 0.5255 0.5605 0.6035 0.6508 0.6980 0.7541 0.8103 0.8591 0.8941 0.9291 0.9557 0.9779 1.0000"/><feFuncB type="table" tableValues="0.0000 0.0417 0.0833 0.1250 0.1866 0.2531 0.3167 0.3779 0.4392 0.4747 0.5101 0.5303 0.5216 0.5128 0.4827 0.4413 0.4000 0.3203 0.2405 0.1882 0.1882 0.1882 0.2037 0.2274 0.2510 0.3219 0.3927 0.4794 0.5961 0.7128 0.8140 0.9070 1.0000"/><feFuncA type="linear" slope="0" intercept="1"/></feComponentTransfer></filter><filter id="b2" x="-10%" y="-10%" width="120%" height="120%"><feGaussianBlur stdDeviation="16"/></filter><clipPath id="cp2"><path d="M462 0 L388 40 L334 80 L298 113 L262 160 L237 196 L215 243 L196 280 L190 304 L160 390 L135 460 L118 512 L512 512 L512 0 Z"/></clipPath></defs><g filter="url(#pf2)"><g filter="url(#b2)"><rect x="-60" y="-60" width="640" height="640" fill="#8a8a8a"/><ellipse cx="40" cy="30" rx="120" ry="60" fill="#747474"/><ellipse cx="60" cy="112" rx="135" ry="55" fill="#626262"/><ellipse cx="40" cy="130" rx="70" ry="40" fill="#5c5c5c"/><ellipse cx="150" cy="120" rx="60" ry="80" fill="#7d7d7d"/><ellipse cx="330" cy="40" rx="170" ry="50" fill="#a4a4a4"/><ellipse cx="230" cy="70" rx="80" ry="40" fill="#939393"/><ellipse cx="230" cy="225" rx="170" ry="55" fill="#adadad" transform="rotate(-8 230 225)"/><ellipse cx="30" cy="240" rx="60" ry="40" fill="#8e8e8e"/><ellipse cx="30" cy="335" rx="90" ry="50" fill="#707070"/><ellipse cx="170" cy="330" rx="70" ry="40" fill="#979797"/><ellipse cx="110" cy="440" rx="160" ry="70" fill="#adadad" transform="rotate(-10 110 440)"/><ellipse cx="40" cy="500" rx="80" ry="30" fill="#939393"/><ellipse cx="300" cy="330" rx="150" ry="100" fill="#a0a0a0"/><ellipse cx="420" cy="200" rx="100" ry="120" fill="#939393"/></g><g clip-path="url(#cp2)"><g filter="url(#b2)"><rect x="-60" y="-60" width="640" height="640" fill="#707070"/><path d="M480 6 L406 46 L352 86 L316 119 L280 166 L255 202 L233 249 L214 286 L208 310 L178 396 L153 466 L136 518" stroke="#676767" stroke-width="46" fill="none"/><ellipse cx="470" cy="40" rx="60" ry="40" fill="#767676"/><ellipse cx="300" cy="400" rx="120" ry="120" fill="#6c6c6c"/><ellipse cx="420" cy="300" rx="100" ry="100" fill="#7d7d7d"/></g></g><pattern id="h2" width="4" height="4" patternUnits="userSpaceOnUse"><rect x="0" y="0" width="2" height="1" fill="#fff"/><rect x="1" y="1" width="2" height="1" fill="#fff"/><rect x="2" y="2" width="2" height="1" fill="#fff"/><rect x="3" y="3" width="1" height="1" fill="#fff"/><rect x="0" y="3" width="1" height="1" fill="#fff"/><rect x="2" y="0" width="2" height="1" fill="#000"/><rect x="3" y="1" width="1" height="1" fill="#000"/><rect x="0" y="1" width="1" height="1" fill="#000"/><rect x="0" y="2" width="2" height="1" fill="#000"/><rect x="1" y="3" width="2" height="1" fill="#000"/></pattern><rect width="512" height="512" fill="url(#h2)" opacity="0.110"/><circle cx="124" cy="23" r="1.5" fill="#fff"/><circle cx="177" cy="35" r="1.5" fill="#fff"/><circle cx="5" cy="66" r="1.5" fill="#fff"/><circle cx="3" cy="77" r="1.5" fill="#fff"/><circle cx="37" cy="121" r="1.5" fill="#fff"/><circle cx="124" cy="100" r="1.5" fill="#fff"/><circle cx="74" cy="130" r="1.5" fill="#fff"/><circle cx="40" cy="175" r="1.5" fill="#fff"/><circle cx="134" cy="183" r="1.5" fill="#fff"/><circle cx="3" cy="213" r="1" fill="#fff"/><circle cx="45" cy="283" r="1" fill="#fff"/><circle cx="95" cy="316" r="2" fill="#fff"/><circle cx="42" cy="377" r="1.5" fill="#fff"/><circle cx="55" cy="464" r="1.5" fill="#fff"/><circle cx="213" cy="285" r="1.5" fill="#fff"/><circle cx="198" cy="40" r="2" fill="#fff"/><path d="M0 393 h70" stroke="#d9d9d9" stroke-width="1.200"/><path d="M105 215 h40" stroke="#e6e6e6" stroke-width="1"/></g></svg>
<div class="a" style="left:539px;top:19px;width:11px;height:535px;border:1px solid #000;background:linear-gradient(#ffffff 0.0%,#fff5d6 4.2%,#fee9a8 8.3%,#fdd974 12.5%,#f6c153 16.7%,#eeaa3c 20.8%,#e49532 25.0%,#d48530 29.2%,#bc793b 33.3%,#93755e 37.5%,#716f74 41.7%,#546783 45.8%,#425a87 50.0%,#31437d 54.2%,#222a6c 58.3%,#181c51 62.5%,#0f1234 66.7%,#08091b 70.8%,#020308 75.0%,#000000 79.2%,#000000 83.3%,#000000 87.5%,#000000 91.7%,#000000 95.8%,#000000 100.0%)"></div><svg style="left:0;top:0" width="1" height="1"><path d="M550 19.5 h8M550 44.5 h4M550 97.5 h8" stroke="#000" stroke-width="1" fill="none"/></svg><span class="t" style="left:552.00px;top:22.00px;font-size:12.3px;line-height:12.3px;letter-spacing:1.172px;">2.3 nm</span><span class="t" style="left:552.00px;top:84.00px;font-size:12.3px;line-height:12.3px;letter-spacing:0.701px;">2.0</span>
<span class="t" style="left:5.50px;top:557.00px;font-size:13.5px;line-height:13.5px;letter-spacing:0.000px;"></span>
</div>
<div class="a" style="left:617px;top:185px;width:623px;height:577px;background:#edebe6;border-radius:4px 4px 0 0;overflow:hidden;box-shadow:0 0 0 1px #6e685c">
<div class="tb"></div><div class="a" style="left:8px;top:1px;width:16px;height:16px;background:linear-gradient(100deg,#4a5c88,#3a4c80 50%,#50628c)"></div><span class="t" style="left:81.00px;top:2.00px;font-size:13.8px;line-height:13.8px;letter-spacing:0.477px;font-weight:bold;color:#b3a999;">atomicstep.gwy [1D FFT Filtered Data 9] 1:1 (Gwyddion)</span>
<svg style="left:531px;top:2.6px" width="12" height="12"><path d="M6 10.500 V3 M2.800 6 L6 2.800 L9.200 6" stroke="#b9b0a2" stroke-width="1.7" fill="none"/></svg><svg style="left:554px;top:2.6px" width="12" height="12"><path d="M3 10.300 H8.500" stroke="#b9b0a2" stroke-width="1.7"/></svg><svg style="left:577px;top:2.6px" width="12" height="12"><rect x="2.500" y="3" width="7.500" height="7" stroke="#b9b0a2" stroke-width="1.36" fill="none"/></svg><svg style="left:600px;top:2.6px" width="12" height="12"><path d="M2.500 2.500 L9.500 9.500 M9.500 2.500 L2.500 9.500" stroke="#b9b0a2" stroke-width="1.7"/></svg>
<svg style="left:13px;top:23px" width="9" height="15"><path d="M1 1 L7.500 7.500 L1 14" stroke="#000" stroke-width="2" fill="none"/></svg>
<div class="a" style="left:27px;top:19px;width:512px;height:23px;border:1px solid #aaa498;border-bottom:none;border-radius:4px 4px 0 0;background:#edebe6;box-shadow:inset 1px 1px 0 #fbfaf8"></div><svg style="left:0;top:0" width="1" height="1"><path d="M27.5 21 V42M40.5 36 V42M53.5 32 V42M65.5 36 V42M78.5 21 V42M91.5 36 V42M104.5 32 V42M117.5 36 V42M130.5 21 V42M142.5 36 V42M155.5 32 V42M168.5 36 V42M181.5 21 V42M194.5 36 V42M207.5 32 V42M219.5 36 V42M232.5 21 V42M245.5 36 V42M258.5 32 V42M271.5 36 V42M284.5 21 V42M296.5 36 V42M309.5 32 V42M322.5 36 V42M335.5 21 V42M348.5 36 V42M360.5 32 V42M373.5 36 V42M386.5 21 V42M399.5 36 V42M412.5 32 V42M425.5 36 V42M437.5 21 V42M450.5 36 V42M463.5 32 V42M476.5 36 V42M489.5 21 V42M502.5 36 V42M514.5 32 V42M527.5 36 V42" stroke="#000" stroke-width="1" fill="none"/><path d="M527 33 h10 l-5 6 z" fill="#000"/></svg><span class="t" style="left:34.00px;top:21.00px;font-size:12.3px;line-height:12.3px;letter-spacing:1.149px;">0 µm</span><span class="t" style="left:85.00px;top:21.00px;font-size:12.3px;line-height:12.3px;letter-spacing:0.000px;">1</span><span class="t" style="left:137.00px;top:21.00px;font-size:12.3px;line-height:12.3px;letter-spacing:0.000px;">2</span><span class="t" style="left:188.00px;top:21.00px;font-size:12.3px;line-height:12.3px;letter-spacing:0.000px;">3</span><span class="t" style="left:239.00px;top:21.00px;font-size:12.3px;line-height:12.3px;letter-spacing:0.000px;">4</span><span class="t" style="left:291.00px;top:21.00px;font-size:12.3px;line-height:12.3px;letter-spacing:0.000px;">5</span><span class="t" style="left:342.00px;top:21.00px;font-size:12.3px;line-height:12.3px;letter-spacing:0.000px;">6</span><span class="t" style="left:393.00px;top:21.00px;font-size:12.3px;line-height:12.3px;letter-spacing:0.000px;">7</span><span class="t" style="left:444.00px;top:21.00px;font-size:12.3px;line-height:12.3px;letter-spacing:0.000px;">8</span><span class="t" style="left:496.00px;top:21.00px;font-size:12.3px;line-height:12.3px;letter-spacing:0.000px;">9</span>
<div class="a" style="left:3px;top:42px;width:24px;height:512px;border:1px solid #aaa498;border-right:none;border-radius:4px 0 0 4px;background:#edebe6;box-shadow:inset 1px 1px 0 #fbfaf8"></div><svg style="left:0;top:0" width="1" height="1"><path d="M5 42.5 H27M21 55.5 H27M17 68.5 H27M21 80.5 H27M5 93.5 H27M21 106.5 H27M17 119.5 H27M21 132.5 H27M5 145.5 H27M21 157.5 H27M17 170.5 H27M21 183.5 H27M5 196.5 H27M21 209.5 H27M17 222.5 H27M21 234.5 H27M5 247.5 H27M21 260.5 H27M17 273.5 H27M21 286.5 H27M5 298.5 H27M21 311.5 H27M17 324.5 H27M21 337.5 H27M5 350.5 H27M21 363.5 H27M17 375.5 H27M21 388.5 H27M5 401.5 H27M21 414.5 H27M17 427.5 H27M21 440.5 H27M5 452.5 H27M21 465.5 H27M17 478.5 H27M21 491.5 H27M5 504.5 H27M21 517.5 H27M17 529.5 H27M21 542.5 H27" stroke="#000" stroke-width="1" fill="none"/></svg><span class="t" style="left:16.8px;top:48.5px;font-size:12.3px;line-height:12.3px;transform-origin:0 0;transform:rotate(90deg);letter-spacing:0.852px">0 µm</span><span class="t" style="left:16.8px;top:99.5px;font-size:12.3px;line-height:12.3px;transform-origin:0 0;transform:rotate(90deg);letter-spacing:0.360px">1</span><span class="t" style="left:16.8px;top:151.5px;font-size:12.3px;line-height:12.3px;transform-origin:0 0;transform:rotate(90deg);letter-spacing:0.360px">2</span><span class="t" style="left:16.8px;top:202.5px;font-size:12.3px;line-height:12.3px;transform-origin:0 0;transform:rotate(90deg);letter-spacing:0.360px">3</span><span class="t" style="left:16.8px;top:253.5px;font-size:12.3px;line-height:12.3px;transform-origin:0 0;transform:rotate(90deg);letter-spacing:0.360px">4</span><span class="t" style="left:16.8px;top:304.5px;font-size:12.3px;line-height:12.3px;transform-origin:0 0;transform:rotate(90deg);letter-spacing:0.360px">5</span><span class="t" style="left:16.8px;top:356.5px;font-size:12.3px;line-height:12.3px;transform-origin:0 0;transform:rotate(90deg);letter-spacing:0.360px">6</span><span class="t" style="left:16.8px;top:407.5px;font-size:12.3px;line-height:12.3px;transform-origin:0 0;transform:rotate(90deg);letter-spacing:0.360px">7</span><span class="t" style="left:16.8px;top:458.5px;font-size:12.3px;line-height:12.3px;transform-origin:0 0;transform:rotate(90deg);letter-spacing:0.360px">8</span><span class="t" style="left:16.8px;top:510.5px;font-size:12.3px;line-height:12.3px;transform-origin:0 0;transform:rotate(90deg);letter-spacing:0.360px">9</span>
<svg style="left:27px;top:42px" width="512" height="512" viewBox="0 0 512 512"><defs><filter id="pf3" x="0" y="0" width="512" height="512" filterUnits="userSpaceOnUse" color-interpolation-filters="sRGB"><feTurbulence type="fractalNoise" baseFrequency="0.4 0.85" numOctaves="2" seed="11" result="n"/><feColorMatrix in="n" type="matrix" values="1 0 0 0 0  1 0 0 0 0  1 0 0 0 0  0 0 0 0 1" result="n1"/><feComposite in="SourceGraphic" in2="n1" operator="arithmetic" k1="0" k2="1" k3="0.78" k4="-0.39" result="h"/><feComponentTransfer in="h"><feFuncR type="table" tableValues="0.0000 0.0123 0.0245 0.0368 0.0532 0.0707 0.0922 0.1167 0.1412 0.1766 0.2120 0.2493 0.2902 0.3310 0.3935 0.4674 0.5412 0.6327 0.7243 0.7974 0.8353 0.8732 0.9018 0.9254 0.9490 0.9653 0.9815 0.9932 0.9961 0.9990 1.0000 1.0000 1.0000"/><feFuncG type="table" tableValues="0.0000 0.0147 0.0294 0.0441 0.0639 0.0849 0.1113 0.1419 0.1725 0.2346 0.2966 0.3473 0.3765 0.4056 0.4254 0.4401 0.4549 0.4638 0.4726 0.4905 0.5255 0.5605 0.6035 0.6508 0.6980 0.7541 0.8103 0.8591 0.8941 0.9291 0.9557 0.9779 1.0000"/><feFuncB type="table" tableValues="0.0000 0.0417 0.0833 0.1250 0.1866 0.2531 0.3167 0.3779 0.4392 0.4747 0.5101 0.5303 0.5216 0.5128 0.4827 0.4413 0.4000 0.3203 0.2405 0.1882 0.1882 0.1882 0.2037 0.2274 0.2510 0.3219 0.3927 0.4794 0.5961 0.7128 0.8140 0.9070 1.0000"/><feFuncA type="linear" slope="0" intercept="1"/></feComponentTransfer></filter><filter id="b3" x="-10%" y="-10%" width="120%" height="120%"><feGaussianBlur stdDeviation="10"/></filter><clipPath id="cp3"><path d="M462 0 L388 40 L334 80 L298 113 L262 160 L237 196 L215 243 L196 280 L190 304 L160 390 L135 460 L118 512 L512 512 L512 0 Z"/></clipPath></defs><g filter="url(#pf3)"><g filter="url(#b3)"><rect x="-60" y="-60" width="640" height="640" fill="#7e7e7e"/><ellipse cx="71" cy="25" rx="67" ry="28" fill="#636363"/><ellipse cx="43" cy="25" rx="31" ry="16" fill="#585858"/><ellipse cx="112" cy="56" rx="124" ry="22" fill="#969696" transform="rotate(-10 112 56)"/><ellipse cx="333" cy="7" rx="112" ry="25" fill="#919191"/><ellipse cx="151" cy="112" rx="81" ry="39" fill="#636363"/><ellipse cx="143" cy="130" rx="33" ry="19" fill="#5a5a5a"/><ellipse cx="41" cy="79" rx="45" ry="31" fill="#8d8d8d"/><ellipse cx="23" cy="141" rx="42" ry="31" fill="#636363"/><ellipse cx="53" cy="187" rx="42" ry="19" fill="#919191"/><ellipse cx="153" cy="184" rx="112" ry="33" fill="#989898" transform="rotate(-4 153 184)"/><ellipse cx="200" cy="189" rx="50" ry="22" fill="#a8a8a8"/><ellipse cx="43" cy="223" rx="47" ry="25" fill="#6a6a6a"/><ellipse cx="92" cy="256" rx="101" ry="22" fill="#949494"/><ellipse cx="125" cy="305" rx="76" ry="31" fill="#666666"/><ellipse cx="28" cy="312" rx="31" ry="33" fill="#919191"/><ellipse cx="117" cy="364" rx="50" ry="28" fill="#919191"/><ellipse cx="71" cy="425" rx="62" ry="39" fill="#6f6f6f"/><ellipse cx="115" cy="474" rx="42" ry="42" fill="#888888"/><path d="M318 74 L282 107 L246 154 L221 190 L199 237 L180 274 L174 298" stroke="#919191" stroke-width="30" fill="none"/></g><g clip-path="url(#cp3)"><g filter="url(#b3)"><rect x="-60" y="-60" width="640" height="640" fill="#6d6d6d"/><path d="M480 6 L406 46 L352 86 L316 119 L280 166 L255 202 L233 249 L214 286 L208 310 L178 396 L153 466 L136 518" stroke="#535353" stroke-width="46" fill="none"/><ellipse cx="418" cy="61" rx="104" ry="39" fill="#818181"/><ellipse cx="356" cy="123" rx="76" ry="22" fill="#5f5f5f"/><ellipse cx="451" cy="138" rx="67" ry="33" fill="#868686"/><ellipse cx="341" cy="194" rx="93" ry="28" fill="#5f5f5f"/><ellipse cx="474" cy="202" rx="59" ry="19" fill="#363636"/><ellipse cx="407" cy="207" rx="36" ry="14" fill="#4c4c4c"/><ellipse cx="305" cy="241" rx="93" ry="22" fill="#7f7f7f"/><ellipse cx="489" cy="256" rx="42" ry="28" fill="#bfbfbf"/><ellipse cx="430" cy="256" rx="33" ry="16" fill="#919191"/><ellipse cx="225" cy="330" rx="45" ry="59" fill="#5d5d5d"/><ellipse cx="338" cy="302" rx="79" ry="33" fill="#747474"/><ellipse cx="192" cy="448" rx="42" ry="70" fill="#5f5f5f"/><ellipse cx="269" cy="410" rx="42" ry="56" fill="#7a7a7a"/><ellipse cx="410" cy="423" rx="112" ry="98" fill="#7a7a7a"/></g></g><circle cx="124" cy="23" r="1.5" fill="#fff"/><circle cx="177" cy="35" r="1.5" fill="#fff"/><circle cx="5" cy="66" r="1.5" fill="#fff"/><circle cx="3" cy="77" r="1.5" fill="#fff"/><circle cx="37" cy="121" r="1.5" fill="#fff"/><circle cx="124" cy="100" r="1.5" fill="#fff"/><circle cx="74" cy="130" r="1.5" fill="#fff"/><circle cx="135" cy="185" r="2" fill="#fff"/><circle cx="95" cy="316" r="1.5" fill="#fff"/><circle cx="42" cy="377" r="1.5" fill="#fff"/><circle cx="385" cy="40" r="2" fill="#fff"/><circle cx="339" cy="120" r="2" fill="#fff"/><circle cx="336" cy="128" r="2" fill="#fff"/><circle cx="265" cy="151" r="1.5" fill="#fff"/><circle cx="238" cy="168" r="2" fill="#fff"/><circle cx="260" cy="200" r="1.5" fill="#fff"/><circle cx="286" cy="204" r="2" fill="#fff"/><circle cx="340" cy="280" r="1.5" fill="#fff"/><circle cx="448" cy="160" r="1.5" fill="#fff"/><circle cx="420" cy="135" r="1.5" fill="#fff"/><circle cx="290" cy="65" r="1.5" fill="#fff"/><circle cx="460" cy="305" r="1.5" fill="#fff"/><circle cx="405" cy="294" r="1.5" fill="#fff"/><path d="M300 127 h70" stroke="#1a1a1a" stroke-width="1.500" stroke-dasharray="2 2"/><path d="M110 235 h40" stroke="#e6e6e6" stroke-width="1"/><path d="M390 230 h35" stroke="#d9d9d9" stroke-width="1"/></g></svg>
<div class="a" style="left:539px;top:19px;width:11px;height:535px;border:1px solid #000;background:linear-gradient(#ffffff 0.0%,#fff7df 4.2%,#fff0c0 8.3%,#fee498 12.5%,#fdd870 16.7%,#f8c558 20.8%,#f2b240 25.0%,#eaa238 29.2%,#e29230 33.3%,#d58630 37.5%,#c87a30 41.7%,#a9774b 45.8%,#8a7466 50.0%,#716f74 54.2%,#586a82 58.3%,#4a6085 62.5%,#3c5688 66.7%,#30417c 70.8%,#242c70 75.0%,#1c225b 79.2%,#141746 83.3%,#0e1030 87.5%,#080a1c 91.7%,#04050e 95.8%,#000000 100.0%)"></div><svg style="left:0;top:0" width="1" height="1"><path d="M550 19.5 h8M550 79.5 h4M550 136.5 h4M550 194.5 h4M550 251.5 h4M550 309.5 h4" stroke="#000" stroke-width="1" fill="none"/></svg><span class="t" style="left:552.00px;top:22.00px;font-size:12.3px;line-height:12.3px;letter-spacing:1.172px;">1.0 nm</span><span class="t" style="left:552.00px;top:66.00px;font-size:12.3px;line-height:12.3px;letter-spacing:0.701px;">0.8</span><span class="t" style="left:552.00px;top:123.00px;font-size:12.3px;line-height:12.3px;letter-spacing:0.701px;">0.6</span><span class="t" style="left:552.00px;top:181.00px;font-size:12.3px;line-height:12.3px;letter-spacing:0.701px;">0.4</span><span class="t" style="left:552.00px;top:238.00px;font-size:12.3px;line-height:12.3px;letter-spacing:0.701px;">0.2</span><span class="t" style="left:552.00px;top:296.00px;font-size:12.3px;line-height:12.3px;letter-spacing:0.781px;">-0.0</span><span class="t" style="left:552.00px;top:354.00px;font-size:12.3px;line-height:12.3px;letter-spacing:0.781px;">-0.2</span>
<span class="t" style="left:5.50px;top:557.00px;font-size:13.5px;line-height:13.5px;letter-spacing:0.000px;"></span>
</div>
<span class="t" style="left:799.00px;top:742.00px;font-size:13.5px;line-height:13.5px;letter-spacing:-0.265px;">nm</span>
<div class="a" style="left:1260px;top:34px;width:311px;height:560px;background:#edebe6;border-radius:4px 4px 0 0;overflow:hidden;box-shadow:0 0 0 1px #6e685c">
<div class="tb"></div><div class="a" style="left:14px;top:1px;width:5px;height:16px;background:#1c2050"></div>
<div class="a" style="left:33px;top:0;width:176px;height:19px;overflow:hidden"><span class="t" style="left:0.00px;top:2.00px;font-size:13.8px;line-height:13.8px;letter-spacing:0.399px;font-weight:bold;color:#b3a999;">atomicstep.gwy [Straightened</span></div>
<svg style="left:219px;top:2.6px" width="12" height="12"><path d="M6 10.500 V3 M2.800 6 L6 2.800 L9.200 6" stroke="#b9b0a2" stroke-width="1.7" fill="none"/></svg><svg style="left:242px;top:2.6px" width="12" height="12"><path d="M3 10.300 H8.500" stroke="#b9b0a2" stroke-width="1.7"/></svg><svg style="left:265px;top:2.6px" width="12" height="12"><rect x="2.500" y="3" width="7.500" height="7" stroke="#b9b0a2" stroke-width="1.36" fill="none"/></svg><svg style="left:288px;top:2.6px" width="12" height="12"><path d="M2.500 2.500 L9.500 9.500 M9.500 2.500 L2.500 9.500" stroke="#b9b0a2" stroke-width="1.7"/></svg>
<svg style="left:13px;top:23px" width="9" height="15"><path d="M1 1 L7.500 7.500 L1 14" stroke="#000" stroke-width="2" fill="none"/></svg>
<div class="a" style="left:27px;top:19px;width:200px;height:23px;border:1px solid #aaa498;border-bottom:none;border-radius:4px 4px 0 0;background:#edebe6;box-shadow:inset 1px 1px 0 #fbfaf8"></div><svg style="left:0;top:0" width="1" height="1"><path d="M27.5 21 V42M40.5 36 V42M52.5 32 V42M65.5 36 V42M78.5 21 V42M91.5 36 V42M104.5 32 V42M116.5 36 V42M129.5 21 V42M142.5 36 V42M154.5 32 V42M167.5 36 V42M180.5 21 V42M193.5 36 V42M206.5 32 V42M218.5 36 V42" stroke="#000" stroke-width="1" fill="none"/><path d="M47 33 h10 l-5 6 z" fill="#000"/></svg><span class="t" style="left:34.00px;top:21.00px;font-size:12.3px;line-height:12.3px;letter-spacing:1.149px;">0 µm</span><span class="t" style="left:85.00px;top:21.00px;font-size:12.3px;line-height:12.3px;letter-spacing:0.000px;">1</span><span class="t" style="left:136.00px;top:21.00px;font-size:12.3px;line-height:12.3px;letter-spacing:0.000px;">2</span><span class="t" style="left:187.00px;top:21.00px;font-size:12.3px;line-height:12.3px;letter-spacing:0.000px;">3</span>
<div class="a" style="left:3px;top:42px;width:24px;height:520px;border:1px solid #aaa498;border-right:none;border-radius:4px 0 0 4px;background:#edebe6;box-shadow:inset 1px 1px 0 #fbfaf8"></div><svg style="left:0;top:0" width="1" height="1"><path d="M5 42.5 H27M21 55.5 H27M17 68.5 H27M21 80.5 H27M5 93.5 H27M21 106.5 H27M17 118.5 H27M21 131.5 H27M5 144.5 H27M21 157.5 H27M17 170.5 H27M21 182.5 H27M5 195.5 H27M21 208.5 H27M17 220.5 H27M21 233.5 H27M5 246.5 H27M21 259.5 H27M17 272.5 H27M21 284.5 H27M5 297.5 H27M21 310.5 H27M17 322.5 H27M21 335.5 H27M5 348.5 H27M21 361.5 H27M17 374.5 H27M21 386.5 H27M5 399.5 H27M21 412.5 H27M17 424.5 H27M21 437.5 H27M5 450.5 H27M21 463.5 H27M17 476.5 H27M21 488.5 H27M5 501.5 H27M21 514.5 H27M17 526.5 H27M21 539.5 H27M5 552.5 H27" stroke="#000" stroke-width="1" fill="none"/><path d="M18 488 v10 l6 -5 z" fill="#000"/></svg><span class="t" style="left:16.8px;top:48.5px;font-size:12.3px;line-height:12.3px;transform-origin:0 0;transform:rotate(90deg);letter-spacing:0.852px">0 µm</span><span class="t" style="left:16.8px;top:99.5px;font-size:12.3px;line-height:12.3px;transform-origin:0 0;transform:rotate(90deg);letter-spacing:0.360px">1</span><span class="t" style="left:16.8px;top:150.5px;font-size:12.3px;line-height:12.3px;transform-origin:0 0;transform:rotate(90deg);letter-spacing:0.360px">2</span><span class="t" style="left:16.8px;top:201.5px;font-size:12.3px;line-height:12.3px;transform-origin:0 0;transform:rotate(90deg);letter-spacing:0.360px">3</span><span class="t" style="left:16.8px;top:252.5px;font-size:12.3px;line-height:12.3px;transform-origin:0 0;transform:rotate(90deg);letter-spacing:0.360px">4</span><span class="t" style="left:16.8px;top:303.5px;font-size:12.3px;line-height:12.3px;transform-origin:0 0;transform:rotate(90deg);letter-spacing:0.360px">5</span><span class="t" style="left:16.8px;top:354.5px;font-size:12.3px;line-height:12.3px;transform-origin:0 0;transform:rotate(90deg);letter-spacing:0.360px">6</span><span class="t" style="left:16.8px;top:405.5px;font-size:12.3px;line-height:12.3px;transform-origin:0 0;transform:rotate(90deg);letter-spacing:0.360px">7</span><span class="t" style="left:16.8px;top:456.5px;font-size:12.3px;line-height:12.3px;transform-origin:0 0;transform:rotate(90deg);letter-spacing:0.360px">8</span><span class="t" style="left:16.8px;top:507.5px;font-size:12.3px;line-height:12.3px;transform-origin:0 0;transform:rotate(90deg);letter-spacing:0.360px">9</span><span class="t" style="left:16.8px;top:558.5px;font-size:12.3px;line-height:12.3px;transform-origin:0 0;transform:rotate(90deg);letter-spacing:-3.240px">10</span>
<svg style="left:27px;top:42px" width="200" height="520" viewBox="0 0 200 520"><defs><filter id="pf4" x="0" y="0" width="200" height="520" filterUnits="userSpaceOnUse" color-interpolation-filters="sRGB"><feTurbulence type="fractalNoise" baseFrequency="0.6 0.6" numOctaves="2" seed="5" result="n"/><feColorMatrix in="n" type="matrix" values="1 0 0 0 0  1 0 0 0 0  1 0 0 0 0  0 0 0 0 1" result="n1"/><feComposite in="SourceGraphic" in2="n1" operator="arithmetic" k1="0" k2="1" k3="0.55" k4="-0.275" result="h"/><feComponentTransfer in="h"><feFuncR type="table" tableValues="0.0000 0.0123 0.0245 0.0368 0.0532 0.0707 0.0922 0.1167 0.1412 0.1766 0.2120 0.2493 0.2902 0.3310 0.3935 0.4674 0.5412 0.6327 0.7243 0.7974 0.8353 0.8732 0.9018 0.9254 0.9490 0.9653 0.9815 0.9932 0.9961 0.9990 1.0000 1.0000 1.0000"/><feFuncG type="table" tableValues="0.0000 0.0147 0.0294 0.0441 0.0639 0.0849 0.1113 0.1419 0.1725 0.2346 0.2966 0.3473 0.3765 0.4056 0.4254 0.4401 0.4549 0.4638 0.4726 0.4905 0.5255 0.5605 0.6035 0.6508 0.6980 0.7541 0.8103 0.8591 0.8941 0.9291 0.9557 0.9779 1.0000"/><feFuncB type="table" tableValues="0.0000 0.0417 0.0833 0.1250 0.1866 0.2531 0.3167 0.3779 0.4392 0.4747 0.5101 0.5303 0.5216 0.5128 0.4827 0.4413 0.4000 0.3203 0.2405 0.1882 0.1882 0.1882 0.2037 0.2274 0.2510 0.3219 0.3927 0.4794 0.5961 0.7128 0.8140 0.9070 1.0000"/><feFuncA type="linear" slope="0" intercept="1"/></feComponentTransfer></filter><filter id="b4" x="-10%" y="-10%" width="120%" height="120%"><feGaussianBlur stdDeviation="9"/></filter></defs><g filter="url(#pf4)"><g filter="url(#b4)"><rect x="-40" y="-40" width="280" height="600" fill="#a3a3a3"/><ellipse cx="60" cy="40" rx="40" ry="60" fill="#b2b2b2" transform="rotate(30 60 40)"/><ellipse cx="20" cy="180" rx="40" ry="60" fill="#adadad"/><ellipse cx="20" cy="250" rx="40" ry="20" fill="#999999"/><ellipse cx="20" cy="440" rx="70" ry="120" fill="#6e6e6e"/></g><rect x="100" y="0" width="100" height="520" fill="#757575"/><clipPath id="cr4"><rect x="100" y="0" width="100" height="520"/></clipPath><g clip-path="url(#cr4)"><g filter="url(#b4)"><ellipse cx="175" cy="60" rx="30" ry="80" fill="#949494"/><ellipse cx="125" cy="50" rx="20" ry="60" fill="#6b6b6b"/></g></g><circle cx="97" cy="10" r="2" fill="#fff"/><circle cx="34" cy="118" r="1.5" fill="#fff"/><circle cx="132" cy="106" r="2.2" fill="#fff"/><circle cx="18" cy="380" r="2.5" fill="#fff"/><circle cx="2" cy="250" r="2" fill="#fff"/><path d="M0 300 Q15 296 32 288" stroke="#ebebeb" stroke-width="1.2" fill="none"/><path d="M140 115 L168 80" stroke="#262626" stroke-width="2" stroke-dasharray="2 2"/></g><path d="M0 0 H55 L0 77 Z" fill="#69c425"/><path d="M0.5 0 V77" stroke="#a040e0" stroke-width="1"/><path d="M0 73.5 H200" stroke="#5a7aa0" stroke-width="1"/></svg>
<div class="a" style="left:227px;top:19px;width:11px;height:543px;border:1px solid #000;background:linear-gradient(#ffffff 0.0%,#fff7df 4.2%,#fff0c0 8.3%,#fee498 12.5%,#fdd870 16.7%,#f8c558 20.8%,#f2b240 25.0%,#eaa238 29.2%,#e29230 33.3%,#d58630 37.5%,#c87a30 41.7%,#a9774b 45.8%,#8a7466 50.0%,#716f74 54.2%,#586a82 58.3%,#4a6085 62.5%,#3c5688 66.7%,#30417c 70.8%,#242c70 75.0%,#1c225b 79.2%,#141746 83.3%,#0e1030 87.5%,#080a1c 91.7%,#04050e 95.8%,#000000 100.0%)"></div><svg style="left:0;top:0" width="1" height="1"><path d="M238 16.5 h8M238 35.5 h4M238 71.5 h4M238 107.5 h4M238 143.5 h4" stroke="#000" stroke-width="1" fill="none"/></svg><span class="t" style="left:240.00px;top:22.00px;font-size:12.3px;line-height:12.3px;letter-spacing:1.172px;">0.8 nm</span><span class="t" style="left:240.00px;top:57.00px;font-size:12.3px;line-height:12.3px;letter-spacing:0.701px;">0.7</span><span class="t" style="left:240.00px;top:93.00px;font-size:12.3px;line-height:12.3px;letter-spacing:0.701px;">0.6</span><span class="t" style="left:240.00px;top:129.00px;font-size:12.3px;line-height:12.3px;letter-spacing:0.701px;">0.5</span>
</div>
<div class="a" style="left:1318px;top:178px;width:311px;height:440px;background:#edebe6;border-radius:4px 4px 0 0;overflow:hidden;box-shadow:0 0 0 1px #6e685c">
<div class="tb"></div><div class="a" style="left:13px;top:1px;width:6px;height:16px;background:linear-gradient(90deg,#d89a3a 50%,#2c3a78 50%)"></div>
<div class="a" style="left:33px;top:0;width:176px;height:19px;overflow:hidden"><span class="t" style="left:0.00px;top:2.00px;font-size:13.8px;line-height:13.8px;letter-spacing:0.399px;font-weight:bold;color:#b3a999;">atomicstep.gwy [Straightened</span></div>
<svg style="left:219px;top:2.6px" width="12" height="12"><path d="M6 10.500 V3 M2.800 6 L6 2.800 L9.200 6" stroke="#b9b0a2" stroke-width="1.7" fill="none"/></svg><svg style="left:242px;top:2.6px" width="12" height="12"><path d="M3 10.300 H8.500" stroke="#b9b0a2" stroke-width="1.7"/></svg><svg style="left:265px;top:2.6px" width="12" height="12"><rect x="2.500" y="3" width="7.500" height="7" stroke="#b9b0a2" stroke-width="1.36" fill="none"/></svg><svg style="left:288px;top:2.6px" width="12" height="12"><path d="M2.500 2.500 L9.500 9.500 M9.500 2.500 L2.500 9.500" stroke="#b9b0a2" stroke-width="1.7"/></svg>
<svg style="left:13px;top:23px" width="9" height="15"><path d="M1 1 L7.500 7.500 L1 14" stroke="#000" stroke-width="2" fill="none"/></svg>
<div class="a" style="left:27px;top:19px;width:200px;height:23px;border:1px solid #aaa498;border-bottom:none;border-radius:4px 4px 0 0;background:#edebe6;box-shadow:inset 1px 1px 0 #fbfaf8"></div><svg style="left:0;top:0" width="1" height="1"><path d="M27.5 21 V42M40.5 36 V42M52.5 32 V42M65.5 36 V42M78.5 21 V42M91.5 36 V42M104.5 32 V42M116.5 36 V42M129.5 21 V42M142.5 36 V42M154.5 32 V42M167.5 36 V42M180.5 21 V42M193.5 36 V42M206.5 32 V42M218.5 36 V42" stroke="#000" stroke-width="1" fill="none"/><path d="M167 33 h10 l-5 6 z" fill="#000"/></svg><span class="t" style="left:34.00px;top:21.00px;font-size:12.3px;line-height:12.3px;letter-spacing:1.149px;">0 µm</span><span class="t" style="left:85.00px;top:21.00px;font-size:12.3px;line-height:12.3px;letter-spacing:0.000px;">1</span><span class="t" style="left:136.00px;top:21.00px;font-size:12.3px;line-height:12.3px;letter-spacing:0.000px;">2</span><span class="t" style="left:187.00px;top:21.00px;font-size:12.3px;line-height:12.3px;letter-spacing:0.000px;">3</span>
<div class="a" style="left:3px;top:42px;width:24px;height:400px;border:1px solid #aaa498;border-right:none;border-radius:4px 0 0 4px;background:#edebe6;box-shadow:inset 1px 1px 0 #fbfaf8"></div><svg style="left:0;top:0" width="1" height="1"><path d="M5 42.5 H27M21 55.5 H27M17 68.5 H27M21 80.5 H27M5 93.5 H27M21 106.5 H27M17 118.5 H27M21 131.5 H27M5 144.5 H27M21 157.5 H27M17 170.5 H27M21 182.5 H27M5 195.5 H27M21 208.5 H27M17 220.5 H27M21 233.5 H27M5 246.5 H27M21 259.5 H27M17 272.5 H27M21 284.5 H27M5 297.5 H27M21 310.5 H27M17 322.5 H27M21 335.5 H27M5 348.5 H27M21 361.5 H27M17 374.5 H27M21 386.5 H27M5 399.5 H27M21 412.5 H27M17 424.5 H27M21 437.5 H27" stroke="#000" stroke-width="1" fill="none"/><path d="M18 290 v10 l6 -5 z" fill="#000"/></svg><span class="t" style="left:16.8px;top:48.5px;font-size:12.3px;line-height:12.3px;transform-origin:0 0;transform:rotate(90deg);letter-spacing:0.852px">0 µm</span><span class="t" style="left:16.8px;top:99.5px;font-size:12.3px;line-height:12.3px;transform-origin:0 0;transform:rotate(90deg);letter-spacing:0.360px">1</span><span class="t" style="left:16.8px;top:150.5px;font-size:12.3px;line-height:12.3px;transform-origin:0 0;transform:rotate(90deg);letter-spacing:0.360px">2</span><span class="t" style="left:16.8px;top:201.5px;font-size:12.3px;line-height:12.3px;transform-origin:0 0;transform:rotate(90deg);letter-spacing:0.360px">3</span><span class="t" style="left:16.8px;top:252.5px;font-size:12.3px;line-height:12.3px;transform-origin:0 0;transform:rotate(90deg);letter-spacing:0.360px">4</span><span class="t" style="left:16.8px;top:303.5px;font-size:12.3px;line-height:12.3px;transform-origin:0 0;transform:rotate(90deg);letter-spacing:0.360px">5</span><span class="t" style="left:16.8px;top:354.5px;font-size:12.3px;line-height:12.3px;transform-origin:0 0;transform:rotate(90deg);letter-spacing:0.360px">6</span><span class="t" style="left:16.8px;top:405.5px;font-size:12.3px;line-height:12.3px;transform-origin:0 0;transform:rotate(90deg);letter-spacing:0.360px">7</span>
<svg style="left:27px;top:42px" width="200" height="400" viewBox="0 0 200 400"><defs><filter id="pf5" x="0" y="0" width="200" height="400" filterUnits="userSpaceOnUse" color-interpolation-filters="sRGB"><feTurbulence type="fractalNoise" baseFrequency="0.6 0.6" numOctaves="2" seed="9" result="n"/><feColorMatrix in="n" type="matrix" values="1 0 0 0 0  1 0 0 0 0  1 0 0 0 0  0 0 0 0 1" result="n1"/><feComposite in="SourceGraphic" in2="n1" operator="arithmetic" k1="0" k2="1" k3="0.55" k4="-0.275" result="h"/><feComponentTransfer in="h"><feFuncR type="table" tableValues="0.0000 0.0123 0.0245 0.0368 0.0532 0.0707 0.0922 0.1167 0.1412 0.1766 0.2120 0.2493 0.2902 0.3310 0.3935 0.4674 0.5412 0.6327 0.7243 0.7974 0.8353 0.8732 0.9018 0.9254 0.9490 0.9653 0.9815 0.9932 0.9961 0.9990 1.0000 1.0000 1.0000"/><feFuncG type="table" tableValues="0.0000 0.0147 0.0294 0.0441 0.0639 0.0849 0.1113 0.1419 0.1725 0.2346 0.2966 0.3473 0.3765 0.4056 0.4254 0.4401 0.4549 0.4638 0.4726 0.4905 0.5255 0.5605 0.6035 0.6508 0.6980 0.7541 0.8103 0.8591 0.8941 0.9291 0.9557 0.9779 1.0000"/><feFuncB type="table" tableValues="0.0000 0.0417 0.0833 0.1250 0.1866 0.2531 0.3167 0.3779 0.4392 0.4747 0.5101 0.5303 0.5216 0.5128 0.4827 0.4413 0.4000 0.3203 0.2405 0.1882 0.1882 0.1882 0.2037 0.2274 0.2510 0.3219 0.3927 0.4794 0.5961 0.7128 0.8140 0.9070 1.0000"/><feFuncA type="linear" slope="0" intercept="1"/></feComponentTransfer></filter><filter id="b5" x="-10%" y="-10%" width="120%" height="120%"><feGaussianBlur stdDeviation="9"/></filter></defs><g filter="url(#pf5)"><g filter="url(#b5)"><rect x="-40" y="-40" width="280" height="480" fill="#a1a1a1"/><ellipse cx="40" cy="35" rx="60" ry="22" fill="#bdbdbd" transform="rotate(-30 40 35)"/><ellipse cx="50" cy="190" rx="75" ry="24" fill="#c7c7c7" transform="rotate(-28 50 190)"/><ellipse cx="20" cy="110" rx="40" ry="30" fill="#999999"/><ellipse cx="50" cy="290" rx="60" ry="35" fill="#8f8f8f"/><ellipse cx="85" cy="95" rx="20" ry="40" fill="#999999"/></g><rect x="100" y="0" width="100" height="400" fill="#595959"/><clipPath id="cr5"><rect x="100" y="0" width="100" height="400"/></clipPath><g clip-path="url(#cr5)"><g filter="url(#b5)"><ellipse cx="170" cy="60" rx="40" ry="70" fill="#6e6e6e"/><ellipse cx="150" cy="205" rx="60" ry="30" fill="#3d3d3d"/><ellipse cx="180" cy="300" rx="40" ry="40" fill="#666666"/><ellipse cx="125" cy="110" rx="22" ry="50" fill="#4c4c4c"/><ellipse cx="160" cy="140" rx="40" ry="30" fill="#5e5e5e"/></g></g><circle cx="60" cy="28" r="1.5" fill="#fff"/><circle cx="87" cy="130" r="2" fill="#fff"/><circle cx="124" cy="146" r="2" fill="#fff"/><circle cx="145" cy="134" r="2" fill="#fff"/><circle cx="20" cy="315" r="1.8" fill="#fff"/><circle cx="140" cy="287" r="2" fill="#fff"/><circle cx="130" cy="232" r="1.2" fill="#fff"/><path d="M118 56 L148 12" stroke="#b2b2b2" stroke-width="2" stroke-dasharray="2 2"/><path d="M2 238 Q60 215 99 188" stroke="#f2f2f2" stroke-width="1.200" fill="none"/></g></svg>
<div class="a" style="left:227px;top:19px;width:11px;height:423px;border:1px solid #000;background:linear-gradient(#ffffff 0.0%,#fff8e3 4.2%,#fff1c6 8.3%,#fee8a4 12.5%,#fddd80 16.7%,#facf64 20.8%,#f5bd4e 25.0%,#f0ad3e 29.2%,#e89f36 33.3%,#e19130 37.5%,#d58630 41.7%,#c97b30 45.8%,#af7845 50.0%,#93755e 54.2%,#7b716e 58.3%,#646c7b 62.5%,#526683 66.7%,#465d86 70.8%,#3a5286 75.0%,#2f3f7b 79.2%,#242c70 83.3%,#1d235d 87.5%,#15194b 91.7%,#0f1236 95.8%,#0a0c22 100.0%)"></div><svg style="left:0;top:0" width="1" height="1"><path d="M238 19.5 h8M238 68.5 h4M238 107.5 h4M238 147 h4M238 186.5 h4M238 225.5 h4M238 265 h4M238 304.5 h4M238 343.5 h4" stroke="#000" stroke-width="1" fill="none"/></svg><span class="t" style="left:240.00px;top:22.00px;font-size:12.3px;line-height:12.3px;letter-spacing:1.172px;">0.6 nm</span><span class="t" style="left:240.00px;top:55.00px;font-size:12.3px;line-height:12.3px;letter-spacing:0.701px;">0.5</span><span class="t" style="left:240.00px;top:94.00px;font-size:12.3px;line-height:12.3px;letter-spacing:0.701px;">0.4</span><span class="t" style="left:240.00px;top:133.00px;font-size:12.3px;line-height:12.3px;letter-spacing:0.701px;">0.3</span><span class="t" style="left:240.00px;top:173.00px;font-size:12.3px;line-height:12.3px;letter-spacing:0.701px;">0.2</span><span class="t" style="left:240.00px;top:212.00px;font-size:12.3px;line-height:12.3px;letter-spacing:0.701px;">0.1</span><span class="t" style="left:240.00px;top:251.00px;font-size:12.3px;line-height:12.3px;letter-spacing:0.781px;">-0.0</span><span class="t" style="left:240.00px;top:290.00px;font-size:12.3px;line-height:12.3px;letter-spacing:0.781px;">-0.1</span><span class="t" style="left:240.00px;top:330.00px;font-size:12.3px;line-height:12.3px;letter-spacing:0.781px;">-0.2</span>
</div>
<div class="a" style="left:1647px;top:34px;width:275px;height:652px;background:#edebe6;border-radius:4px 4px 0 0;overflow:hidden;box-shadow:0 0 0 1px #6e685c">
<div class="tb"></div><svg style="left:8px;top:1px" width="16" height="16" viewBox="0 0 16 16"><defs><radialGradient id="gi8_1" cx="50%" cy="50%" r="70%"><stop offset="0" stop-color="#e8560e"/><stop offset="1" stop-color="#b02a08"/></radialGradient></defs><rect width="16" height="16" fill="url(#gi8_1)"/><path d="M11 3.500 Q6 2 5 6 Q4.500 8.500 7.500 8.500 Q4.500 9.500 5.500 11.500 Q7 14 10.500 12.500 L10.500 14" stroke="#ffb010" stroke-width="1.800" fill="none"/></svg><span class="t" style="left:54.50px;top:2.00px;font-size:13.8px;line-height:13.8px;letter-spacing:0.681px;font-weight:bold;color:#b3a999;">Data Browser</span>
<svg style="left:183px;top:2.6px" width="12" height="12"><path d="M6 10.500 V3 M2.800 6 L6 2.800 L9.200 6" stroke="#b9b0a2" stroke-width="1.7" fill="none"/></svg><svg style="left:206px;top:2.6px" width="12" height="12"><path d="M3 10.300 H8.500" stroke="#b9b0a2" stroke-width="1.7"/></svg><svg style="left:229px;top:2.6px" width="12" height="12"><rect x="2.500" y="3" width="7.500" height="7" stroke="#b9b0a2" stroke-width="1.36" fill="none"/></svg><svg style="left:252px;top:2.6px" width="12" height="12"><path d="M2.500 2.500 L9.500 9.500 M9.500 2.500 L2.500 9.500" stroke="#b9b0a2" stroke-width="1.7"/></svg>
<span class="t" style="left:7.30px;top:28.00px;font-size:13.5px;line-height:13.5px;letter-spacing:0.499px;">atomicstep.gwy</span>
<svg style="left:245.5px;top:27px" width="18" height="17"><path d="M2 2 L15 14 M15 2 L2 14" stroke="#8c8c88" stroke-width="3.400" stroke-linecap="round"/></svg>
<div class="a" style="left:4px;top:54.5px;width:58px;height:24px;background:linear-gradient(#e6e2db,#d6d1c8);border:1px solid #aaa498;border-bottom:none;border-radius:4px 4px 0 0"></div>
<span class="t" style="left:9.00px;top:60.00px;font-size:13.5px;line-height:13.5px;letter-spacing:0.344px;">Images</span>
<div class="a" style="left:61px;top:52px;width:58px;height:27px;background:linear-gradient(#f7f6f4,#edebe6);border:1px solid #aaa498;border-bottom:none;border-top:2px solid #5b9bd8;border-radius:4px 4px 0 0"></div>
<span class="t" style="left:66.60px;top:58.00px;font-size:13.5px;line-height:13.5px;letter-spacing:0.144px;">Graphs</span>
<div class="a" style="left:118px;top:54.5px;width:61px;height:24px;background:linear-gradient(#e6e2db,#d6d1c8);border:1px solid #aaa498;border-bottom:none;border-radius:4px 4px 0 0"></div>
<span class="t" style="left:122.50px;top:60.00px;font-size:13.5px;line-height:13.5px;letter-spacing:0.404px;">Spectra</span>
<div class="a" style="left:178px;top:54.5px;width:59px;height:24px;background:linear-gradient(#e6e2db,#d6d1c8);border:1px solid #aaa498;border-bottom:none;border-radius:4px 4px 0 0"></div>
<span class="t" style="left:182.00px;top:60.00px;font-size:13.5px;line-height:13.5px;letter-spacing:0.382px;">Volume</span>
<div class="a" style="left:236px;top:54.5px;width:35px;height:24px;background:linear-gradient(#e6e2db,#d6d1c8);border:1px solid #aaa498;border-bottom:none;border-radius:4px 4px 0 0"></div>
<span class="t" style="left:239.50px;top:60.00px;font-size:13.5px;line-height:13.5px;letter-spacing:-0.600px;">XYZ</span>
<div class="a" style="left:4px;top:78px;width:266px;height:533px;background:#fff;border:1px solid #aaa498"></div>
<div class="a" style="left:5px;top:79px;width:264px;height:53px;background:linear-gradient(#4689cc,#3c7dc0)"></div>
<div class="a" style="left:7.5px;top:80.5px;width:68.5px;height:50.5px;background:#fff;border:1px solid #c8c8c8"></div>
<svg style="left:0;top:0" width="1" height="1"><path d="M8.5 86.2L9.8 87.1L11.2 86.8L12.5 83.8L13.8 82.5L15.2 85.5L16.5 86.2L17.8 88.5L19.1 88.8L20.5 85.6L21.8 89.6L23.1 90.2L24.5 89.6L25.8 91.3L27.1 91.0L28.5 91.4L29.8 91.8L31.1 92.5L32.4 92.5L33.8 92.4L35.1 91.0L36.4 91.5L37.8 88.7L39.1 89.8L40.4 88.1L41.8 99.3L43.1 123.2L44.4 120.0L45.7 120.9L47.1 119.3L48.4 117.6L49.7 119.5L51.1 118.5L52.4 120.2L53.7 117.6L55.0 117.8L56.4 117.0L57.7 115.4L59.0 116.7L60.4 117.6L61.7 118.4L63.0 116.0L64.4 117.9L65.7 119.7L67.0 121.3L68.3 121.0L69.7 120.0L71.0 122.5L72.3 125.2L73.7 124.0L75.0 126.9" stroke="#555" stroke-width="0.800" fill="none"/></svg>
<div class="cb" style="left:82px;top:99px"></div>
<svg style="left:82px;top:99px" width="13" height="13"><path d="M2.800 5.300 L5.300 8.600 L10 1.500" stroke="#000" stroke-width="2" fill="none"/></svg>
<span class="t" style="left:103.40px;top:99.00px;font-size:13.5px;line-height:13.5px;letter-spacing:0.144px;color:#fff;">Median</span>
<span class="t" style="left:238.70px;top:99.00px;font-size:13.5px;line-height:13.5px;color:#fff;">1</span>
<div class="btn" style="left:4px;top:614px;width:86px;height:33px"></div>
<div class="btn" style="left:93px;top:614px;width:86.5px;height:33px"></div>
<div class="btn" style="left:182px;top:614px;width:87.5px;height:33px"></div>
<svg style="left:126px;top:620px" width="20" height="20"><rect x="1.500" y="1.500" width="10" height="12" fill="#f4f4f2" stroke="#a8a8a4"/><path d="M3 4 h7 M3 6 h7 M3 8 h7 M3 10 h5" stroke="#b8b8b4"/><rect x="8.500" y="6.500" width="10" height="12" fill="#f8f8f6" stroke="#a8a8a4"/><path d="M10 9 h7 M10 11 h7 M10 13 h7 M10 15 h5" stroke="#b8b8b4"/></svg>
<svg style="left:215.5px;top:620px" width="20" height="20"><circle cx="10" cy="10" r="8" fill="#fff" stroke="#d81818" stroke-width="2.400"/><path d="M6.500 6.500 L13.500 13.500 M13.500 6.500 L6.500 13.500" stroke="#222" stroke-width="2.200"/></svg>
</div>
<div class="a" style="left:235px;top:628px;width:559px;height:412px;background:#edebe6;border-radius:4px 4px 0 0;overflow:hidden;box-shadow:0 0 0 1px #6e685c">
<div class="tb"></div><svg style="left:9px;top:1px" width="16" height="16" viewBox="0 0 16 16"><defs><radialGradient id="gi9_1" cx="50%" cy="50%" r="70%"><stop offset="0" stop-color="#e8560e"/><stop offset="1" stop-color="#b02a08"/></radialGradient></defs><rect width="16" height="16" fill="url(#gi9_1)"/><path d="M11 3.500 Q6 2 5 6 Q4.500 8.500 7.500 8.500 Q4.500 9.500 5.500 11.500 Q7 14 10.500 12.500 L10.500 14" stroke="#ffb010" stroke-width="1.800" fill="none"/></svg><span class="t" style="left:218.70px;top:2.00px;font-size:13.8px;line-height:13.8px;letter-spacing:0.706px;font-weight:bold;color:#b3a999;">Median</span>
<svg style="left:466px;top:2.6px" width="12" height="12"><path d="M6 10.500 V3 M2.800 6 L6 2.800 L9.200 6" stroke="#b9b0a2" stroke-width="1.7" fill="none"/></svg><svg style="left:489px;top:2.6px" width="12" height="12"><path d="M3 10.300 H8.500" stroke="#b9b0a2" stroke-width="1.7"/></svg><svg style="left:512px;top:2.6px" width="12" height="12"><rect x="2.500" y="3" width="7.500" height="7" stroke="#b9b0a2" stroke-width="1.36" fill="none"/></svg><svg style="left:535.2px;top:2.6px" width="12" height="12"><path d="M2.500 2.500 L9.500 9.500 M9.500 2.500 L2.500 9.500" stroke="#b9b0a2" stroke-width="1.7"/></svg>
<div class="a" style="left:5px;top:43px;width:549px;height:328px;background:#fff;border:1px solid #aaa498;border-radius:0 3px 3px 3px"></div>
<div class="a" style="left:5px;top:18px;width:50px;height:26px;background:linear-gradient(#f7f6f4,#f3f2ef 60%,#fff);border:1px solid #aaa498;border-bottom:none;border-top:2px solid #5b9bd8;border-radius:4px 4px 0 0"></div>
<span class="t" style="left:10.00px;top:25.00px;font-size:13.5px;line-height:13.5px;letter-spacing:0.242px;">Graph</span>
<div class="a" style="left:54.5px;top:20.5px;width:41.5px;height:23px;background:linear-gradient(#e3dfd8,#d6d1c8);border:1px solid #aaa498;border-bottom:none;border-radius:4px 4px 0 0"></div>
<span class="t" style="left:58.70px;top:26.00px;font-size:13.5px;line-height:13.5px;letter-spacing:0.627px;">Data</span>
<div class="a" style="left:95px;top:20.5px;width:55.5px;height:23px;background:linear-gradient(#e3dfd8,#d6d1c8);border:1px solid #aaa498;border-bottom:none;border-radius:4px 4px 0 0"></div>
<span class="t" style="left:100.50px;top:26.00px;font-size:13.5px;line-height:13.5px;letter-spacing:0.041px;">Curves</span>
<div class="a" style="left:-235px;top:-628px;width:1px;height:1px">
<svg style="left:0;top:0" width="1" height="1"><rect x="301.5" y="680" width="479" height="267" fill="#fff"/><path d="M421.5 680 V947M541.5 680 V947M661.5 680 V947M301.5 893.5 H780.5M301.5 840.5 H780.5M301.5 786.5 H780.5M301.5 733.5 H780.5" stroke="#e4e4e4" stroke-width="1" fill="none"/><path d="M301.5 695.3L303.8 688.7L306.1 686.8L308.5 695.0L310.8 700.0L313.1 695.0L315.4 691.8L317.8 688.0L320.1 698.3L322.4 697.8L324.7 687.4L327.1 687.7L329.4 681.8L331.7 683.6L334.0 688.0L336.3 688.0L338.7 674.6L341.0 689.6L343.3 693.2L345.6 696.1L348.0 691.4L350.3 692.4L352.6 696.0L354.9 695.9L357.3 695.1L359.6 693.8L361.9 692.5L364.2 697.5L366.5 707.7L368.9 696.5L371.2 707.3L373.5 702.1L375.8 709.6L378.2 703.8L380.5 708.9L382.8 705.4L385.1 691.9L387.5 709.2L389.8 706.3L392.1 717.9L394.4 714.3L396.7 711.0L399.1 715.9L401.4 715.0L403.7 717.5L406.0 724.2L408.4 717.9L410.7 725.8L413.0 714.2L415.3 726.9L417.7 722.5L420.0 727.1L422.3 723.2L424.6 730.7L427.0 723.0L429.3 728.4L431.6 721.7L433.9 724.8L436.2 727.1L438.6 731.5L440.9 724.1L443.2 725.5L445.5 720.0L447.9 730.2L450.2 726.2L452.5 727.0L454.8 728.6L457.2 729.4L459.5 730.1L461.8 734.3L464.1 736.8L466.4 734.4L468.8 730.2L471.1 725.9L473.4 728.4L475.7 728.1L478.1 729.4L480.4 729.8L482.7 731.4L485.0 727.5L487.4 721.6L489.7 730.5L492.0 731.1L494.3 717.3L496.6 724.3L499.0 719.7L501.3 719.1L503.6 727.5L505.9 709.3L508.3 711.2L510.6 717.6L512.9 713.6L515.2 715.4L517.6 719.0L519.9 714.0L522.2 710.5L524.5 705.5L526.8 705.8L529.2 707.3L531.5 716.4L533.8 767.7L536.1 832.3L538.5 875.5L540.8 888.8L543.1 900.8L545.4 896.5L547.8 890.4L550.1 888.3L552.4 882.8L554.7 894.3L557.0 888.7L559.4 884.8L561.7 887.9L564.0 897.7L566.3 881.7L568.7 873.7L571.0 879.2L573.3 887.7L575.6 884.5L578.0 880.8L580.3 869.5L582.6 878.1L584.9 880.1L587.2 872.8L589.6 880.2L591.9 870.5L594.2 882.3L596.5 880.8L598.9 874.7L601.2 870.9L603.5 873.9L605.8 874.8L608.2 884.3L610.5 878.2L612.8 877.0L615.1 875.9L617.4 869.8L619.8 873.5L622.1 867.4L624.4 870.1L626.7 870.8L629.1 867.3L631.4 864.5L633.7 861.1L636.0 866.2L638.4 864.7L640.7 870.4L643.0 856.4L645.3 857.4L647.6 865.5L650.0 867.2L652.3 871.1L654.6 864.6L656.9 864.7L659.3 855.5L661.6 864.9L663.9 869.8L666.2 877.8L668.6 859.4L670.9 865.2L673.2 873.8L675.5 865.2L677.9 873.8L680.2 849.4L682.5 860.7L684.8 863.4L687.1 868.6L689.5 879.5L691.8 871.4L694.1 879.8L696.4 871.1L698.8 885.7L701.1 881.4L703.4 872.7L705.7 872.2L708.1 887.3L710.4 889.9L712.7 879.0L715.0 879.9L717.3 889.4L719.7 888.6L722.0 889.3L724.3 892.4L726.6 890.7L729.0 883.1L731.3 887.5L733.6 882.7L735.9 894.7L738.3 896.6L740.6 902.4L742.9 900.0L745.2 907.5L747.5 911.8L749.9 902.0L752.2 900.6L754.5 905.5L756.8 905.2L759.2 912.3L761.5 918.9L763.8 917.0L766.1 921.1" stroke="#000" stroke-width="0.95" fill="none" stroke-linejoin="round"/><path d="M290 680 H781.2 M290 947 H781.2 M301.5 680 V958.5 M780.5 680 V947.7" stroke="#000" stroke-width="1.300" fill="none"/><path d="M290 679.9 h11.5M295 685.22 h6.5M295 690.54 h6.5M295 695.86 h6.5M295 701.18 h6.5M295 706.5 h6.5M295 711.82 h6.5M295 717.14 h6.5M295 722.46 h6.5M295 727.78 h6.5M290 733.1 h11.5M295 738.42 h6.5M295 743.74 h6.5M295 749.06 h6.5M295 754.38 h6.5M295 759.7 h6.5M295 765.02 h6.5M295 770.34 h6.5M295 775.66 h6.5M295 780.98 h6.5M290 786.3 h11.5M295 791.62 h6.5M295 796.94 h6.5M295 802.26 h6.5M295 807.58 h6.5M295 812.9 h6.5M295 818.22 h6.5M295 823.54 h6.5M295 828.86 h6.5M295 834.18 h6.5M290 839.5 h11.5M295 844.82 h6.5M295 850.14 h6.5M295 855.46 h6.5M295 860.78 h6.5M295 866.1 h6.5M295 871.42 h6.5M295 876.74 h6.5M295 882.06 h6.5M295 887.38 h6.5M290 892.7 h11.5M295 898.02 h6.5M295 903.34 h6.5M295 908.66 h6.5M295 913.98 h6.5M295 919.3 h6.5M295 924.62 h6.5M295 929.94 h6.5M295 935.26 h6.5M295 940.58 h6.5M290 945.9 h11.5M301.5 947 v11.5M313.475 947 v7M325.45 947 v7M337.425 947 v7M349.4 947 v7M361.375 947 v7M373.35 947 v7M385.325 947 v7M397.3 947 v7M409.275 947 v7M421.25 947 v11.5M433.225 947 v7M445.2 947 v7M457.175 947 v7M469.15 947 v7M481.125 947 v7M493.1 947 v7M505.075 947 v7M517.05 947 v7M529.025 947 v7M541 947 v11.5M552.975 947 v7M564.95 947 v7M576.925 947 v7M588.9 947 v7M600.875 947 v7M612.85 947 v7M624.825 947 v7M636.8 947 v7M648.775 947 v7M660.75 947 v11.5M672.725 947 v7M684.7 947 v7M696.675 947 v7M708.65 947 v7M720.625 947 v7M732.6 947 v7M744.575 947 v7M756.55 947 v7M768.525 947 v7M780.5 947 v11.5" stroke="#000" stroke-width="1.250" fill="none"/><rect x="699.5" y="685" width="76" height="20" fill="#fff" stroke="#000" stroke-width="1.200"/><path d="M704 695.3 h16" stroke="#000" stroke-width="1.200"/></svg>
<span class="t" style="left:268.00px;top:680.00px;font-size:11.8px;line-height:11.8px;letter-spacing:0.799px;">0.2</span>
<span class="t" style="left:268.00px;top:727.00px;font-size:11.8px;line-height:11.8px;letter-spacing:0.799px;">0.1</span>
<span class="t" style="left:268.00px;top:780.00px;font-size:11.8px;line-height:11.8px;letter-spacing:0.799px;">0.0</span>
<span class="t" style="left:263.50px;top:834.00px;font-size:11.8px;line-height:11.8px;letter-spacing:0.735px;">-0.1</span>
<span class="t" style="left:263.50px;top:888.00px;font-size:11.8px;line-height:11.8px;letter-spacing:0.735px;">-0.2</span>
<span class="t" style="left:263.50px;top:934.00px;font-size:11.8px;line-height:11.8px;letter-spacing:0.735px;">-0.3</span>
<span class="t" style="left:301.60px;top:962.00px;font-size:11.8px;line-height:11.8px;letter-spacing:0.000px;">0</span>
<span class="t" style="left:417.00px;top:962.00px;font-size:11.8px;line-height:11.8px;letter-spacing:0.000px;">1</span>
<span class="t" style="left:538.00px;top:962.00px;font-size:11.8px;line-height:11.8px;letter-spacing:0.000px;">2</span>
<span class="t" style="left:658.00px;top:962.00px;font-size:11.8px;line-height:11.8px;letter-spacing:0.000px;">3</span>
<span class="t" style="left:772.50px;top:962.00px;font-size:11.8px;line-height:11.8px;letter-spacing:0.000px;">4</span>
<span class="t" style="left:521.80px;top:980.00px;font-size:11.8px;line-height:11.8px;letter-spacing:1.134px;">x [µm]</span>
<span class="t" style="left:248px;top:832.5px;font-size:11.8px;line-height:12px;transform-origin:0 0;transform:rotate(-90deg);letter-spacing:0.6px">y [nm]</span>
<span class="t" style="left:724.40px;top:689.00px;font-size:12.6px;line-height:12.6px;letter-spacing:0.534px;">Median</span>
</div>
<div class="btn" style="left:5.5px;top:373.5px;width:33px;height:33px"></div>
<div class="btn" style="left:41.5px;top:373.5px;width:33px;height:33px"></div>
<div class="btn" style="left:77.5px;top:373.5px;width:33px;height:33px"></div>
<div class="btn" style="left:113.5px;top:373.5px;width:33px;height:33px"></div>
<div class="btn" style="left:149.5px;top:373.5px;width:33px;height:33px"></div>
<svg style="left:10px;top:378px" width="24" height="24" viewBox="0 0 24 24"><rect x="0.500" y="0.500" width="23" height="23" fill="#f4f8fc" stroke="#4a90d8"/><path d="M6 1 v22 M12 1 v22 M18 1 v22 M1 6 h22 M1 12 h22 M1 18 h22" stroke="#d0e4f8" stroke-width="1"/><rect x="3.500" y="0.500" width="17" height="4" fill="#f5b800" stroke="#a07800" stroke-width="0.600"/><path d="M3.500 5 V23 M20.500 5 V23" stroke="#000" stroke-width="1.500" stroke-dasharray="2 1.500"/><path d="M1 22 Q6 22 7 14 Q8 6 12 8 Q15 4 17 14 Q18 22 23 22" stroke="#000" stroke-width="1.800" fill="none"/><path d="M1.500 21 h4 M3.500 19 v4 M18.500 21 h4 M20.500 19 v4" stroke="#000"/></svg>
<svg style="left:46px;top:378px" width="24" height="24" viewBox="0 0 24 24"><rect x="0.500" y="0.500" width="23" height="23" fill="#f4f8fc" stroke="#4a90d8"/><path d="M6 1 v22 M12 1 v22 M18 1 v22 M1 6 h22 M1 12 h22 M1 18 h22" stroke="#d0e4f8" stroke-width="1"/><path d="M1 2 Q8 14 23 19" stroke="#000" stroke-width="1.800" fill="none"/><path d="M2 22 L8 15" stroke="#6ab040" stroke-width="3.500"/><circle cx="14" cy="10" r="7.500" fill="#f4f8fc" fill-opacity="0.850" stroke="#888" stroke-width="1.300"/><path d="M10 10 h8 M14 6 v8" stroke="#000" stroke-width="2"/></svg>
<svg style="left:82px;top:378px" width="24" height="24" viewBox="0 0 24 24"><rect x="0.500" y="0.500" width="23" height="23" fill="#f4f8fc" stroke="#4a90d8"/><path d="M6 1 v22 M12 1 v22 M18 1 v22 M1 6 h22 M1 12 h22 M1 18 h22" stroke="#d0e4f8" stroke-width="1"/><path d="M1 2 Q8 14 23 19" stroke="#000" stroke-width="1.800" fill="none"/><path d="M2 22 L8 15" stroke="#6ab040" stroke-width="3.500"/><circle cx="14" cy="10" r="7.500" fill="#f4f8fc" fill-opacity="0.850" stroke="#888" stroke-width="1.300"/><path d="M10 8.500 v-2.500 h2.500 M15.500 6 h2.500 v2.500 M18 11.500 v2.500 h-2.500 M12.500 14 h-2.500 v-2.500" stroke="#000" stroke-width="1.700" fill="none"/></svg>
<svg style="left:118px;top:378px" width="24" height="24" viewBox="0 0 24 24"><text x="4.500" y="11" font-size="10.500" font-weight="bold" font-family="Liberation Sans">log</text><rect x="0.500" y="17.500" width="23" height="5" fill="#f5b800" stroke="#a07800" stroke-width="0.600"/><path d="M3 17.500 v3 M7 17.500 v2 M11 17.500 v3 M15 17.500 v2 M18 17.500 v3 M20 17.500 v2 M22 17.500 v3" stroke="#000" stroke-width="0.900"/></svg>
<svg style="left:154px;top:378px" width="24" height="24" viewBox="0 0 24 24"><rect x="0.500" y="0.500" width="5.500" height="23" fill="#f5b800" stroke="#a07800" stroke-width="0.600"/><path d="M3 2 h3 M4 5 h2 M3 8 h3 M4 11 h2 M3 14 h3 M4 17 h2 M3 20 h3" stroke="#000" stroke-width="0.900"/><text x="8" y="16" font-size="10.500" font-weight="bold" font-family="Liberation Sans">log</text></svg>
<span class="t" style="left:187.30px;top:382.00px;font-size:13.5px;line-height:13.5px;letter-spacing:0.452px;">1.3779 µm, 0.0284 nm</span>
<svg style="left:544px;top:395px" width="12" height="12"><path d="M11 3 L3 11 M11 6 L6 11 M11 9 L9 11" stroke="#c4bfb4" stroke-width="1"/></svg>
</div>
<div class="a" style="left:904px;top:545px;width:806px;height:533px;background:#edebe6;border-radius:4px 4px 0 0;overflow:hidden;box-shadow:0 0 0 1px #4f8fd8">
<div class="a" style="left:0;top:0;width:806px;height:20px;background:linear-gradient(#d4e4f6 0,#a4c6ee 8%,#7cb0e6 45%,#5596da 80%,#4a8cd2);border-bottom:1px solid #2c64a8"></div>
<svg style="left:9px;top:2px" width="16" height="16" viewBox="0 0 16 16"><defs><radialGradient id="gi9_2" cx="50%" cy="50%" r="70%"><stop offset="0" stop-color="#e8560e"/><stop offset="1" stop-color="#b02a08"/></radialGradient></defs><rect width="16" height="16" fill="url(#gi9_2)"/><path d="M11 3.500 Q6 2 5 6 Q4.500 8.500 7.500 8.500 Q4.500 9.500 5.500 11.500 Q7 14 10.500 12.500 L10.500 14" stroke="#ffb010" stroke-width="1.800" fill="none"/></svg>
<span class="t" style="left:348.00px;top:2.00px;font-size:14.5px;line-height:14.5px;letter-spacing:0.078px;font-weight:bold;color:#fff;text-shadow:0 1px 1px #2a5a98;">Fit Graph</span>
<svg style="left:736px;top:4.5px" width="12" height="12"><path d="M6 10.500 V3 M2.800 6 L6 2.800 L9.200 6" stroke="#fff" stroke-width="2" fill="none"/></svg>
<svg style="left:760px;top:4.5px" width="12" height="12"><rect x="2.500" y="3" width="7.500" height="7" stroke="#fff" stroke-width="1.6" fill="none"/></svg>
<svg style="left:783px;top:4.5px" width="12" height="12"><path d="M2.500 2.500 L9.500 9.500 M9.500 2.500 L2.500 9.500" stroke="#fff" stroke-width="2"/></svg>
<div class="a" style="left:730px;top:2px;width:1px;height:17px;background:rgba(255,255,255,0.25);border-left:1px solid rgba(30,80,150,0.35);width:2px"></div>
<div class="a" style="left:754px;top:2px;width:1px;height:17px;background:rgba(255,255,255,0.25);border-left:1px solid rgba(30,80,150,0.35);width:2px"></div>
<div class="a" style="left:777px;top:2px;width:1px;height:17px;background:rgba(255,255,255,0.25);border-left:1px solid rgba(30,80,150,0.35);width:2px"></div>
<div class="a" style="left:6px;top:21px;width:400px;height:463px;background:#fff"></div>
<div class="a" style="left:-904px;top:-545px;width:1px;height:1px">
<svg style="left:0;top:0" width="1" height="1"><rect x="970" y="572.5" width="333" height="406" fill="#fff"/><rect x="1040" y="573.5" width="178" height="404.5" fill="#d19ac0"/><path d="M1053.5 572.5 V978.5M1136.5 572.5 V978.5M1220.5 572.5 V978.5M970 897.5 H1303M970 816.5 H1303M970 735.5 H1303M970 654.5 H1303" stroke="#e4e4e4" stroke-width="1" fill="none"/><path d="M970.0 596.0L971.6 585.8L973.2 582.9L974.8 595.5L976.5 603.0L978.1 595.4L979.7 590.6L981.3 584.8L982.9 600.4L984.5 599.7L986.2 583.9L987.8 584.3L989.4 575.3L991.0 578.1L992.6 584.7L994.2 584.7L995.8 573.2L997.5 587.2L999.1 592.7L1000.7 597.1L1002.3 590.0L1003.9 591.5L1005.5 597.0L1007.1 596.8L1008.8 595.6L1010.4 593.6L1012.0 591.7L1013.6 599.2L1015.2 614.9L1016.8 597.7L1018.5 614.3L1020.1 606.3L1021.7 617.8L1023.3 608.9L1024.9 616.6L1026.5 611.3L1028.1 590.7L1029.8 617.2L1031.4 612.7L1033.0 630.4L1034.6 624.8L1036.2 619.9L1037.8 627.4L1039.4 625.9L1041.1 629.9L1042.7 639.9L1044.3 630.4L1045.9 642.5L1047.5 624.8L1049.1 644.2L1050.8 637.4L1052.4 644.4L1054.0 638.5L1055.6 649.9L1057.2 638.2L1058.8 646.4L1060.4 636.2L1062.1 640.9L1063.7 644.4L1065.3 651.2L1066.9 639.9L1068.5 642.1L1070.1 633.6L1071.7 649.1L1073.4 643.1L1075.0 644.2L1076.6 646.7L1078.2 648.0L1079.8 649.0L1081.4 655.5L1083.1 659.3L1084.7 655.6L1086.3 649.2L1087.9 642.6L1089.5 646.5L1091.1 645.9L1092.7 647.9L1094.4 648.5L1096.0 651.1L1097.6 645.0L1099.2 636.0L1100.8 649.6L1102.4 650.6L1104.0 629.4L1105.7 640.2L1107.3 633.2L1108.9 632.2L1110.5 645.1L1112.1 617.3L1113.7 620.2L1115.4 630.0L1117.0 623.9L1118.6 626.5L1120.2 632.0L1121.8 624.5L1123.4 619.1L1125.0 611.4L1126.7 612.0L1128.3 614.3L1129.9 628.2L1131.5 706.4L1133.1 805.0L1134.7 870.9L1136.4 891.3L1138.0 909.6L1139.6 903.0L1141.2 893.6L1142.8 890.5L1144.4 882.1L1146.0 899.6L1147.7 891.1L1149.3 885.1L1150.9 889.9L1152.5 904.8L1154.1 880.4L1155.7 868.3L1157.3 876.6L1159.0 889.5L1160.6 884.6L1162.2 879.1L1163.8 861.9L1165.4 874.9L1167.0 878.0L1168.7 866.8L1170.3 878.1L1171.9 863.3L1173.5 881.3L1175.1 879.1L1176.7 869.7L1178.3 863.9L1180.0 868.4L1181.6 869.9L1183.2 884.3L1184.8 875.1L1186.4 873.3L1188.0 871.6L1189.6 862.3L1191.3 867.9L1192.9 858.6L1194.5 862.7L1196.1 863.8L1197.7 858.5L1199.3 854.2L1201.0 849.0L1202.6 856.7L1204.2 854.5L1205.8 863.2L1207.4 841.9L1209.0 843.4L1210.6 855.7L1212.3 858.3L1213.9 864.2L1215.5 854.3L1217.1 854.4L1218.7 840.4L1220.3 854.8L1221.9 862.3L1223.6 874.5L1225.2 846.3L1226.8 855.2L1228.4 868.4L1230.0 855.3L1231.6 868.4L1233.3 831.2L1234.9 848.4L1236.5 852.5L1238.1 860.4L1239.7 877.1L1241.3 864.7L1242.9 877.5L1244.6 864.2L1246.2 886.5L1247.8 879.9L1249.4 866.7L1251.0 866.0L1252.6 889.0L1254.2 892.9L1255.9 876.4L1257.5 877.6L1259.1 892.1L1260.7 891.0L1262.3 892.1L1263.9 896.7L1265.6 894.1L1267.2 882.6L1268.8 889.3L1270.4 882.0L1272.0 900.2L1273.6 903.2L1275.2 912.0L1276.9 908.4L1278.5 919.9L1280.1 926.4L1281.7 911.5L1283.3 909.2L1284.9 916.7L1286.5 916.2L1288.2 927.1L1289.8 937.1L1291.4 934.2L1293.0 940.5" stroke="#000" stroke-width="0.9" fill="none" stroke-linejoin="round"/><path d="M1040.0 643.4L1041.8 643.4L1043.6 643.4L1045.3 643.4L1047.1 643.4L1048.9 643.3L1050.7 643.3L1052.5 643.2L1054.2 643.1L1056.0 643.0L1057.8 642.9L1059.6 642.8L1061.4 642.7L1063.1 642.5L1064.9 642.4L1066.7 642.2L1068.5 642.0L1070.3 641.9L1072.0 641.7L1073.8 641.5L1075.6 641.3L1077.4 641.0L1079.2 640.8L1080.9 640.6L1082.7 640.3L1084.5 640.0L1086.3 639.7L1088.1 639.5L1089.8 639.2L1091.6 638.8L1093.4 638.5L1095.2 638.2L1097.0 637.8L1098.7 637.5L1100.5 637.1L1102.3 636.7L1104.1 636.3L1105.9 635.9L1107.6 635.5L1109.4 635.1L1111.2 634.7L1113.0 634.2L1114.8 633.8L1116.5 633.3L1118.3 632.8L1120.1 632.4L1121.9 631.9L1123.7 631.3L1125.4 630.8L1127.2 630.5L1129.0 635.8L1130.8 686.0L1132.6 802.5L1134.3 875.0L1136.1 886.6L1137.9 886.3L1139.7 885.4L1141.5 884.6L1143.2 883.7L1145.0 882.9L1146.8 882.1L1148.6 881.2L1150.4 880.4L1152.1 879.5L1153.9 878.7L1155.7 877.9L1157.5 877.0L1159.3 876.2L1161.0 875.3L1162.8 874.5L1164.6 873.7L1166.4 872.8L1168.2 872.0L1169.9 871.1L1171.7 870.3L1173.5 869.5L1175.3 868.6L1177.1 867.8L1178.8 867.0L1180.6 866.1L1182.4 865.3L1184.2 864.4L1186.0 863.6L1187.7 862.8L1189.5 861.9L1191.3 861.1L1193.1 860.2L1194.9 859.4L1196.6 858.6L1198.4 857.7L1200.2 856.9L1202.0 856.0L1203.8 855.2L1205.5 854.4L1207.3 853.5L1209.1 852.7L1210.9 851.8L1212.7 851.0L1214.4 850.2L1216.2 849.3L1218.0 848.5" stroke="#e81010" stroke-width="1.1" fill="none" stroke-linejoin="round"/><path d="M958.5 572.5 H1303.7 M958.5 978.5 H1303.7 M970 572.5 V990 M1303 572.5 V979.2" stroke="#000" stroke-width="1.300" fill="none"/><path d="M958.5 572.4 h11.5M963.5 580.52 h6.5M963.5 588.64 h6.5M963.5 596.76 h6.5M963.5 604.88 h6.5M963.5 613 h6.5M963.5 621.12 h6.5M963.5 629.24 h6.5M963.5 637.36 h6.5M963.5 645.48 h6.5M958.5 653.6 h11.5M963.5 661.72 h6.5M963.5 669.84 h6.5M963.5 677.96 h6.5M963.5 686.08 h6.5M963.5 694.2 h6.5M963.5 702.32 h6.5M963.5 710.44 h6.5M963.5 718.56 h6.5M963.5 726.68 h6.5M958.5 734.8 h11.5M963.5 742.92 h6.5M963.5 751.04 h6.5M963.5 759.16 h6.5M963.5 767.28 h6.5M963.5 775.4 h6.5M963.5 783.52 h6.5M963.5 791.64 h6.5M963.5 799.76 h6.5M963.5 807.88 h6.5M958.5 816 h11.5M963.5 824.12 h6.5M963.5 832.24 h6.5M963.5 840.36 h6.5M963.5 848.48 h6.5M963.5 856.6 h6.5M963.5 864.72 h6.5M963.5 872.84 h6.5M963.5 880.96 h6.5M963.5 889.08 h6.5M958.5 897.2 h11.5M963.5 905.32 h6.5M963.5 913.44 h6.5M963.5 921.56 h6.5M963.5 929.68 h6.5M963.5 937.8 h6.5M963.5 945.92 h6.5M963.5 954.04 h6.5M963.5 962.16 h6.5M963.5 970.28 h6.5M958.5 978.4 h11.5M970 978.5 v11.5M978.325 978.5 v7M986.65 978.5 v7M994.975 978.5 v7M1003.3 978.5 v7M1011.62 978.5 v7M1019.95 978.5 v7M1028.28 978.5 v7M1036.6 978.5 v7M1044.92 978.5 v7M1053.25 978.5 v11.5M1061.58 978.5 v7M1069.9 978.5 v7M1078.22 978.5 v7M1086.55 978.5 v7M1094.88 978.5 v7M1103.2 978.5 v7M1111.53 978.5 v7M1119.85 978.5 v7M1128.17 978.5 v7M1136.5 978.5 v11.5M1144.83 978.5 v7M1153.15 978.5 v7M1161.47 978.5 v7M1169.8 978.5 v7M1178.12 978.5 v7M1186.45 978.5 v7M1194.78 978.5 v7M1203.1 978.5 v7M1211.42 978.5 v7M1219.75 978.5 v11.5M1228.08 978.5 v7M1236.4 978.5 v7M1244.72 978.5 v7M1253.05 978.5 v7M1261.38 978.5 v7M1269.7 978.5 v7M1278.03 978.5 v7M1286.35 978.5 v7M1294.67 978.5 v7M1303 978.5 v11.5" stroke="#000" stroke-width="1.250" fill="none"/><rect x="1222.5" y="577.5" width="76" height="39" fill="#fff" stroke="#000" stroke-width="1.200"/><path d="M1227 588.5 h16" stroke="#000" stroke-width="1.200"/><path d="M1227 607.5 h16" stroke="#e81010" stroke-width="1.200"/></svg>
<span class="t" style="left:937.60px;top:574.00px;font-size:11.8px;line-height:11.8px;letter-spacing:0.799px;">0.2</span>
<span class="t" style="left:937.60px;top:649.00px;font-size:11.8px;line-height:11.8px;letter-spacing:0.799px;">0.1</span>
<span class="t" style="left:937.60px;top:729.00px;font-size:11.8px;line-height:11.8px;letter-spacing:0.799px;">0.0</span>
<span class="t" style="left:933.10px;top:811.00px;font-size:11.8px;line-height:11.8px;letter-spacing:0.735px;">-0.1</span>
<span class="t" style="left:933.10px;top:893.00px;font-size:11.8px;line-height:11.8px;letter-spacing:0.735px;">-0.2</span>
<span class="t" style="left:933.10px;top:966.00px;font-size:11.8px;line-height:11.8px;letter-spacing:0.735px;">-0.3</span>
<span class="t" style="left:971.30px;top:994.00px;font-size:11.8px;line-height:11.8px;letter-spacing:0.000px;">0</span>
<span class="t" style="left:1049.00px;top:994.00px;font-size:11.8px;line-height:11.8px;letter-spacing:0.000px;">1</span>
<span class="t" style="left:1133.80px;top:994.00px;font-size:11.8px;line-height:11.8px;letter-spacing:0.000px;">2</span>
<span class="t" style="left:1217.00px;top:994.00px;font-size:11.8px;line-height:11.8px;letter-spacing:0.000px;">3</span>
<span class="t" style="left:1295.00px;top:994.00px;font-size:11.8px;line-height:11.8px;letter-spacing:0.000px;">4</span>
<span class="t" style="left:1117.50px;top:1012.00px;font-size:11.8px;line-height:11.8px;letter-spacing:1.134px;">x [µm]</span>
<span class="t" style="left:917px;top:794px;font-size:11.8px;line-height:12px;transform-origin:0 0;transform:rotate(-90deg);letter-spacing:0.6px">y [nm]</span>
<span class="t" style="left:1246.50px;top:582.00px;font-size:12.6px;line-height:12.6px;letter-spacing:0.534px;">Median</span>
<span class="t" style="left:1246.50px;top:601.00px;font-size:12.6px;line-height:12.6px;letter-spacing:0.757px;">Fit</span>
</div>
<span class="t" style="left:412.00px;top:33.00px;font-size:13.5px;line-height:13.5px;letter-spacing:0.361px;"><u>G</u>raph curve:</span>
<div class="btn" style="left:501.5px;top:26px;width:293.500px;height:27px"></div>
<div class="a" style="left:505px;top:31px;width:28px;height:17.5px;background:#000"></div>
<span class="t" style="left:535.00px;top:33.00px;font-size:13.5px;line-height:13.5px;letter-spacing:0.444px;">Median</span>
<span class="t" style="left:412.00px;top:64.00px;font-size:13.5px;line-height:13.5px;letter-spacing:0.314px;">F<u>u</u>nction:</span>
<div class="btn" style="left:501.5px;top:57px;width:293.500px;height:27px"></div>
<span class="t" style="left:507.75px;top:64.00px;font-size:13.5px;line-height:13.5px;letter-spacing:0.577px;">Smooth bent step</span>
<div class="a" style="left:774px;top:30.5px;width:1px;height:18px;background:#cfcac0"></div>
<svg style="left:778.5px;top:32.5px" width="9" height="14"><path d="M1.500 5 L4.500 1.800 L7.500 5 M1.500 9 L4.500 12.200 L7.500 9" stroke="#333" stroke-width="1.500" fill="none"/></svg>
<div class="a" style="left:774px;top:61.5px;width:1px;height:18px;background:#cfcac0"></div>
<svg style="left:778.5px;top:63.5px" width="9" height="14"><path d="M1.500 5 L4.500 1.800 L7.500 5 M1.500 9 L4.500 12.200 L7.500 9" stroke="#333" stroke-width="1.500" fill="none"/></svg>
<span class="t" style="left:412px;top:99px;font-size:13.5px;line-height:13.5px;letter-spacing:0.700px;word-spacing:0.2px"><i>f</i>(<i>x</i>) = <i>y</i><span style="font-size:10px;position:relative;top:4px">0</span> + <i>h</i>/2 erf(<i>ξ</i>/<i>w</i>) + <i>αξ</i> + <i>βξ</i><span style="font-size:10px;position:relative;top:-6px">2</span>, <i>ξ</i> = <i>x</i> − <i>x</i><span style="font-size:10px;position:relative;top:4px">0</span></span>
<span class="t" style="left:412.00px;top:135.00px;font-size:13.5px;line-height:13.5px;letter-spacing:0.780px;font-weight:bold;">Fix</span>
<span class="t" style="left:440.50px;top:135.00px;font-size:13.5px;line-height:13.5px;letter-spacing:1.436px;font-weight:bold;">Parameter</span>
<span class="t" style="left:591.00px;top:135.00px;font-size:13.5px;line-height:13.5px;letter-spacing:0.606px;font-weight:bold;">Error</span>
<svg style="left:668px;top:138.25px" width="12" height="9"><path d="M0.500 4.500 H10 M6.800 1.500 L10 4.500 L6.800 7.500" stroke="#000" stroke-width="1.100" fill="none"/></svg>
<span class="t" style="left:690.50px;top:135.00px;font-size:13.5px;line-height:13.5px;letter-spacing:0.711px;font-weight:bold;">Initial</span>
<div class="cb" style="left:417px;top:164px;width:12.500px;height:12.500px"></div>
<span class="t" style="right:339.5px;top:164px;font-size:13.5px;line-height:13.5px;letter-spacing:0.85px">x<span style="font-size:10px;position:relative;top:3.500px;letter-spacing:0">0</span> =</span>
<span class="t" style="right:282px;top:164px;font-size:13.5px;line-height:13.5px;letter-spacing:0.85px">1.9450</span>
<span class="t" style="left:526.5px;top:164px;font-size:13.5px;line-height:13.5px;letter-spacing:0.85px">µm</span>
<span class="t" style="left:574.5px;top:164px;font-size:13.5px;line-height:13.5px;letter-spacing:0.85px">±</span>
<span class="t" style="left:592px;top:164px;font-size:13.5px;line-height:13.5px;letter-spacing:0.85px">1.2</span>
<span class="t" style="left:614.3px;top:164px;font-size:13.5px;line-height:13.5px;letter-spacing:0.85px">nm</span>
<svg style="left:668px;top:167px" width="12" height="9"><path d="M0.500 4.500 H10 M6.800 1.500 L10 4.500 L6.800 7.500" stroke="#000" stroke-width="1.100" fill="none"/></svg>
<div class="ent" style="left:691px;top:159px;width:104px;height:22.500px"></div>
<span class="t" style="left:696.00px;top:164.00px;font-size:13.2px;line-height:13.2px;letter-spacing:0.8px;">1.91631e-06</span>
<div class="cb" style="left:417px;top:191px;width:12.500px;height:12.500px"></div>
<span class="t" style="right:339.5px;top:191px;font-size:13.5px;line-height:13.5px;letter-spacing:0.85px">y<span style="font-size:10px;position:relative;top:3.500px;letter-spacing:0">0</span> =</span>
<span class="t" style="right:282px;top:191px;font-size:13.5px;line-height:13.5px;letter-spacing:0.85px">−30.825</span>
<span class="t" style="left:526.5px;top:191px;font-size:13.5px;line-height:13.5px;letter-spacing:0.85px">pm</span>
<span class="t" style="left:574.5px;top:191px;font-size:13.5px;line-height:13.5px;letter-spacing:0.85px">±</span>
<span class="t" style="left:592px;top:191px;font-size:13.5px;line-height:13.5px;letter-spacing:0.85px">1.5</span>
<span class="t" style="left:614.3px;top:191px;font-size:13.5px;line-height:13.5px;letter-spacing:0.85px">pm</span>
<svg style="left:668px;top:194px" width="12" height="9"><path d="M0.500 4.500 H10 M6.800 1.500 L10 4.500 L6.800 7.500" stroke="#000" stroke-width="1.100" fill="none"/></svg>
<div class="ent" style="left:691px;top:186px;width:104px;height:22.500px"></div>
<span class="t" style="left:696.00px;top:191.00px;font-size:13.2px;line-height:13.2px;letter-spacing:0.8px;">-2.17227e-11</span>
<div class="cb" style="left:417px;top:218px;width:12.500px;height:12.500px"></div>
<span class="t" style="right:339.5px;top:218px;font-size:13.5px;line-height:13.5px;letter-spacing:0.85px">w =</span>
<span class="t" style="right:282px;top:218px;font-size:13.5px;line-height:13.5px;letter-spacing:0.85px">−24.948</span>
<span class="t" style="left:526.5px;top:218px;font-size:13.5px;line-height:13.5px;letter-spacing:0.85px">nm</span>
<span class="t" style="left:574.5px;top:218px;font-size:13.5px;line-height:13.5px;letter-spacing:0.85px">±</span>
<span class="t" style="left:592px;top:218px;font-size:13.5px;line-height:13.5px;letter-spacing:0.85px">2.3</span>
<span class="t" style="left:614.3px;top:218px;font-size:13.5px;line-height:13.5px;letter-spacing:0.85px">nm</span>
<svg style="left:668px;top:221px" width="12" height="9"><path d="M0.500 4.500 H10 M6.800 1.500 L10 4.500 L6.800 7.500" stroke="#000" stroke-width="1.100" fill="none"/></svg>
<div class="ent" style="left:691px;top:213px;width:104px;height:22.500px"></div>
<span class="t" style="left:696.00px;top:218.00px;font-size:13.2px;line-height:13.2px;letter-spacing:0.8px;">2.65074e-07</span>
<div class="cb" style="left:417px;top:245px;width:12.500px;height:12.500px"></div>
<span class="t" style="right:339.5px;top:245px;font-size:13.5px;line-height:13.5px;letter-spacing:0.85px">h =</span>
<span class="t" style="right:282px;top:245px;font-size:13.5px;line-height:13.5px;letter-spacing:0.85px">−321.75</span>
<span class="t" style="left:526.5px;top:245px;font-size:13.5px;line-height:13.5px;letter-spacing:0.85px">pm</span>
<span class="t" style="left:574.5px;top:245px;font-size:13.5px;line-height:13.5px;letter-spacing:0.85px">±</span>
<span class="t" style="left:592px;top:245px;font-size:13.5px;line-height:13.5px;letter-spacing:0.85px">4.2</span>
<span class="t" style="left:614.3px;top:245px;font-size:13.5px;line-height:13.5px;letter-spacing:0.85px">pm</span>
<svg style="left:668px;top:248px" width="12" height="9"><path d="M0.500 4.500 H10 M6.800 1.500 L10 4.500 L6.800 7.500" stroke="#000" stroke-width="1.100" fill="none"/></svg>
<div class="ent" style="left:691px;top:240px;width:104px;height:22.500px"></div>
<span class="t" style="left:696.00px;top:245.00px;font-size:13.2px;line-height:13.2px;letter-spacing:0.8px;">-3.52294e-10</span>
<div class="cb" style="left:417px;top:272px;width:12.500px;height:12.500px"></div>
<span class="t" style="right:339.5px;top:272px;font-size:13.5px;line-height:13.5px;letter-spacing:0.85px">α =</span>
<span class="t" style="right:282px;top:272px;font-size:13.5px;line-height:13.5px;letter-spacing:0.85px">33.362</span>
<span class="t" style="left:526.5px;top:272px;font-size:13.5px;line-height:13.5px;letter-spacing:0.85px">× 10<span style="font-size:10px;position:relative;top:-5px;letter-spacing:0">-6</span></span>
<span class="t" style="left:574.5px;top:272px;font-size:13.5px;line-height:13.5px;letter-spacing:0.85px">±</span>
<span class="t" style="left:592px;top:272px;font-size:13.5px;line-height:13.5px;letter-spacing:0.85px">3.4</span>
<span class="t" style="left:614.3px;top:272px;font-size:13.5px;line-height:13.5px;letter-spacing:0.85px">× 10<span style="font-size:10px;position:relative;top:-5px;letter-spacing:0">-6</span></span>
<svg style="left:668px;top:275px" width="12" height="9"><path d="M0.500 4.500 H10 M6.800 1.500 L10 4.500 L6.800 7.500" stroke="#000" stroke-width="1.100" fill="none"/></svg>
<div class="ent" style="left:691px;top:267px;width:104px;height:22.500px"></div>
<span class="t" style="left:696.00px;top:272.00px;font-size:13.2px;line-height:13.2px;letter-spacing:0.8px;">-8.30652e-06</span>
<div class="cb" style="left:417px;top:299px;width:12.500px;height:12.500px"></div>
<span class="t" style="right:339.5px;top:299px;font-size:13.5px;line-height:13.5px;letter-spacing:0.85px">β =</span>
<span class="t" style="right:282px;top:299px;font-size:13.5px;line-height:13.5px;letter-spacing:0.85px">16.388</span>
<span class="t" style="left:526.5px;top:299px;font-size:13.5px;line-height:13.5px;letter-spacing:0.85px">m<span style="font-size:10px;position:relative;top:-5px;letter-spacing:0">-1</span></span>
<span class="t" style="left:574.5px;top:299px;font-size:13.5px;line-height:13.5px;letter-spacing:0.85px">±</span>
<span class="t" style="left:592px;top:299px;font-size:13.5px;line-height:13.5px;letter-spacing:0.85px">2.9</span>
<span class="t" style="left:614.3px;top:299px;font-size:13.5px;line-height:13.5px;letter-spacing:0.85px">m<span style="font-size:10px;position:relative;top:-5px;letter-spacing:0">-1</span></span>
<svg style="left:668px;top:302px" width="12" height="9"><path d="M0.500 4.500 H10 M6.800 1.500 L10 4.500 L6.800 7.500" stroke="#000" stroke-width="1.100" fill="none"/></svg>
<div class="ent" style="left:691px;top:294px;width:104px;height:22.500px"></div>
<span class="t" style="left:696.00px;top:299.00px;font-size:13.2px;line-height:13.2px;letter-spacing:0.8px;">-3.91708</span>
<span class="t" style="left:412px;top:331px;font-size:13.5px;line-height:13.5px;letter-spacing:0.85px">χ<span style="font-size:10px;position:relative;top:-5px;letter-spacing:0">2</span> result:</span>
<span class="t" style="left:501.00px;top:330.00px;font-size:13.5px;line-height:13.5px;letter-spacing:0.382px;">1.06e-22</span>
<svg style="left:417.5px;top:356px" width="9" height="14"><path d="M1 1 V12.500 L7.500 6.750 Z" fill="#fff" stroke="#222" stroke-width="1"/></svg>
<span class="t" style="left:435.00px;top:356.00px;font-size:13.5px;line-height:13.5px;letter-spacing:0.908px;font-weight:bold;">Correlation Matrix</span>
<span class="t" style="left:412.00px;top:389.00px;font-size:13.5px;line-height:13.5px;letter-spacing:0.106px;">Range:</span>
<div class="ent" style="left:463px;top:384px;width:72px;height:23px"></div>
<span class="t" style="left:467.80px;top:389.00px;font-size:13.2px;line-height:13.2px;letter-spacing:0.8px;">0.8408</span>
<span class="t" style="left:541.70px;top:389.00px;font-size:13.5px;line-height:13.5px;letter-spacing:1.295px;">to</span>
<div class="ent" style="left:562px;top:384px;width:72px;height:23px"></div>
<span class="t" style="left:566.60px;top:389.00px;font-size:13.2px;line-height:13.2px;letter-spacing:0.8px;">2.9790</span>
<span class="t" style="left:641.00px;top:389.00px;font-size:13.5px;line-height:13.5px;letter-spacing:1.465px;">µm</span>
<div class="cb" style="left:415px;top:414.5px;width:12.500px;height:12.500px"></div>
<span class="t" style="left:434.40px;top:414.00px;font-size:13.5px;line-height:13.5px;letter-spacing:0.251px;">Plot full range</span>
<div class="cb" style="left:415px;top:438.5px;width:12.500px;height:12.500px"></div>
<svg style="left:415px;top:438.5px" width="13" height="13"><path d="M2.800 5.300 L5.300 8.600 L10 1.500" stroke="#000" stroke-width="2" fill="none"/></svg>
<span class="t" style="left:434.40px;top:438.00px;font-size:13.5px;line-height:13.5px;letter-spacing:0.403px;">Create a difference graph</span>
<span class="t" style="left:412.00px;top:462.00px;font-size:13.5px;line-height:13.5px;letter-spacing:0.531px;">Instant:</span>
<div class="cb" style="left:469px;top:462.8px;width:12.500px;height:12.500px"></div>
<span class="t" style="left:488.50px;top:462.00px;font-size:13.5px;line-height:13.5px;letter-spacing:0.710px;">esti<u>m</u>ate</span>
<div class="cb" style="left:556px;top:462.8px;width:12.500px;height:12.500px"></div>
<svg style="left:556px;top:462.8px" width="13" height="13"><path d="M2.800 5.300 L5.300 8.600 L10 1.500" stroke="#000" stroke-width="2" fill="none"/></svg>
<span class="t" style="left:575.40px;top:462.00px;font-size:13.5px;line-height:13.5px;letter-spacing:0.422px;">p<u>l</u>ot</span>
<div class="btn" style="left:12px;top:490px;width:84px;height:31px"></div>
<span class="t" style="left:52.00px;top:499.00px;font-size:13.5px;line-height:13.5px;letter-spacing:0.397px;"><u>H</u>elp</span>
<div class="btn" style="left:151.5px;top:490px;width:83.5px;height:31px"></div>
<span class="t" style="left:197.50px;top:499.00px;font-size:13.5px;line-height:13.5px;letter-spacing:-0.600px;"><u>F</u>it</span>
<div class="btn" style="left:244px;top:490px;width:84px;height:31px"></div>
<span class="t" style="left:257.50px;top:499.00px;font-size:13.5px;line-height:13.5px;letter-spacing:0.641px;"><u>E</u>stimate</span>
<div class="btn" style="left:337px;top:490px;width:84px;height:31px"></div>
<span class="t" style="left:352.00px;top:499.00px;font-size:13.5px;line-height:13.5px;letter-spacing:0.144px;"><u>P</u>lot Inits</span>
<div class="btn" style="left:430px;top:490px;width:84px;height:31px"></div>
<span class="t" style="left:468.00px;top:499.00px;font-size:13.5px;line-height:13.5px;letter-spacing:0.348px;"><u>C</u>opy</span>
<div class="btn" style="left:522.5px;top:490px;width:84.5px;height:31px"></div>
<span class="t" style="left:561.00px;top:499.00px;font-size:13.5px;line-height:13.5px;letter-spacing:0.240px;"><u>S</u>ave</span>
<div class="btn" style="left:615.5px;top:490px;width:84.5px;height:31px"></div>
<span class="t" style="left:648.80px;top:499.00px;font-size:13.5px;line-height:13.5px;letter-spacing:0.203px;"><u>C</u>ancel</span>
<div class="btn" style="left:708.5px;top:490px;width:84.5px;height:31px"></div>
<span class="t" style="left:753.00px;top:499.00px;font-size:13.5px;line-height:13.5px;letter-spacing:-0.600px;"><u>O</u>K</span>
<div class="a" style="left:155px;top:493.5px;width:77.5px;height:25px;border:1px dotted #555;border-radius:2px"></div>
<svg style="left:31px;top:497px" width="16" height="18" viewBox="0 0 16 18"><rect x="0.500" y="0.500" width="15" height="17" rx="1" fill="#fff" stroke="#aaa"/><path d="M2 2 h12" stroke="#ddd"/><circle cx="8" cy="10" r="5" fill="#fff" stroke="#d22" stroke-width="2.200"/><circle cx="8" cy="10" r="2" fill="#fff" stroke="#b00" stroke-width="0.800"/></svg>
<svg style="left:173px;top:495px" width="24" height="22" viewBox="0 0 24 22"><g fill="#dcdcdc" stroke="#6a6a6a" stroke-width="1"><circle cx="7" cy="6" r="4.500" stroke-dasharray="2 1.500" stroke-width="2.500"/><circle cx="7" cy="6" r="3.200"/><circle cx="7" cy="6" r="1.200" fill="#fff"/><circle cx="6" cy="16" r="4" stroke-dasharray="2 1.500" stroke-width="2.400"/><circle cx="6" cy="16" r="2.800"/><circle cx="6" cy="16" r="1" fill="#fff"/><circle cx="16" cy="13" r="6" stroke-dasharray="2.500 1.800" stroke-width="2.800"/><circle cx="16" cy="13" r="4.400"/><circle cx="16" cy="13" r="1.600" fill="#fff"/></g></svg>
<svg style="left:444.5px;top:496px" width="21" height="20" viewBox="0 0 21 20"><rect x="1.500" y="1.500" width="11" height="12" fill="#f6f6f4" stroke="#8c8c88"/><path d="M3.500 4.500 h7 M3.500 6.500 h7 M3.500 8.500 h7 M3.500 10.500 h5" stroke="#aaa"/><rect x="8.500" y="7.500" width="11" height="12" fill="#fafaf8" stroke="#8c8c88"/><path d="M10.500 10.500 h7 M10.500 12.500 h7 M10.500 14.500 h7 M10.500 16.500 h5" stroke="#aaa"/></svg>
<svg style="left:538px;top:495px" width="20" height="23" viewBox="0 0 20 23"><rect x="1.500" y="8.500" width="17" height="13" rx="1.500" fill="#d8d8d4" stroke="#888"/><rect x="5" y="16" width="10" height="4" fill="#f4f4f4" stroke="#888" stroke-width="0.800"/><path d="M10 1 v10 M7 1.500 h6 v6 h3.500 L10 14.500 L3.500 7.500 H7 Z" fill="#58c020" stroke="#2a7a08" stroke-width="1"/></svg>
<svg style="left:626px;top:495px" width="20" height="20" viewBox="0 0 20 20"><path d="M6 0.500 h8 l5.500 5.500 v8 l-5.500 5.500 h-8 l-5.500 -5.500 v-8 z" fill="#e81818" stroke="#f8b0b0" stroke-width="1"/></svg>
<svg style="left:730px;top:498px" width="22" height="19" viewBox="0 0 22 19"><path d="M20 1.500 v8.500 h-9 v4.500 l-9.500 -7 l9.500 -7 v4.500 h4 v-4.500 z" fill="#4a8ad8" stroke="#1c4a98" stroke-width="1.200" transform="translate(0,2)"/><path d="M15.500 2.500 h5 v7" stroke="#9cc4f0" stroke-width="1" fill="none" transform="translate(0,2)"/></svg>
</div>
</body></html>
